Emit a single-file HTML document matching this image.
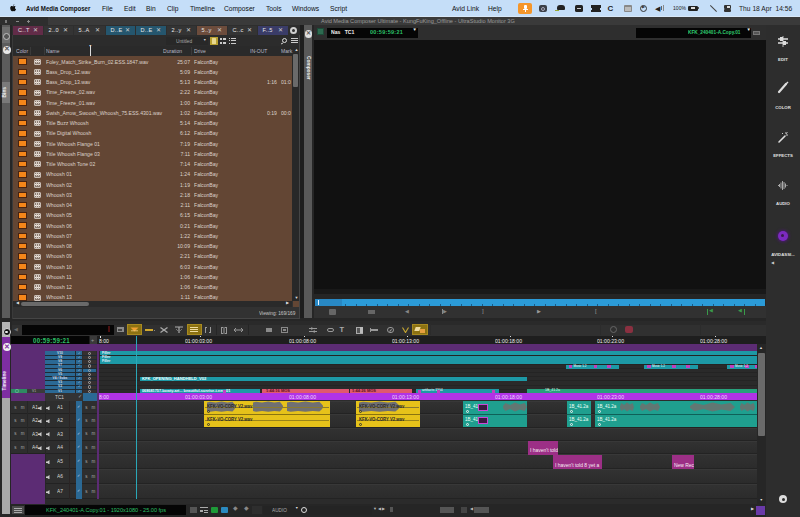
<!DOCTYPE html>
<html><head><meta charset="utf-8">
<style>
*{margin:0;padding:0;box-sizing:border-box}
html,body{width:800px;height:517px;overflow:hidden;background:#262626;font-family:"Liberation Sans",sans-serif}
.a{position:absolute}
.t{position:absolute;white-space:nowrap;line-height:1}
</style></head><body>
<div class="a" style="left:0px;top:0px;width:800px;height:17px;background:#c5def8;"></div>
<div class="a" style="left:0px;top:16px;width:800px;height:1px;background:#d8e8f8;"></div>
<svg class="a" style="left:10.3px;top:4px" width="6.3" height="7.7" viewBox="0 0 9 11"><path d="M6.2 0.5c0 1-0.7 1.9-1.7 2 0-1 0.8-1.9 1.7-2zM4.5 3.1c0.6 0 1.1-0.4 1.8-0.4 0.5 0 1.4 0.2 1.9 1-1.6 0.9-1.3 3.2 0.4 3.8-0.4 1.2-1.3 2.9-2.3 2.9-0.7 0-0.9-0.4-1.7-0.4s-1.1 0.4-1.7 0.4C1.8 10.4 0.3 7.8 0.3 5.6c0-2 1.3-2.9 2.4-2.9 0.7 0 1.3 0.4 1.8 0.4z" fill="#111"/></svg>
<div class="t" style="left:26px;top:6px;font-size:6.7px;color:#101010;transform:scaleX(0.92);transform-origin:0 0;font-weight:bold">Avid Media Composer</div>
<div class="t" style="left:102px;top:6px;font-size:6.7px;color:#101010;">File</div>
<div class="t" style="left:124px;top:6px;font-size:6.7px;color:#101010;">Edit</div>
<div class="t" style="left:146px;top:6px;font-size:6.7px;color:#101010;">Bin</div>
<div class="t" style="left:167px;top:6px;font-size:6.7px;color:#101010;">Clip</div>
<div class="t" style="left:190px;top:6px;font-size:6.7px;color:#101010;">Timeline</div>
<div class="t" style="left:224px;top:6px;font-size:6.7px;color:#101010;">Composer</div>
<div class="t" style="left:266px;top:6px;font-size:6.7px;color:#101010;">Tools</div>
<div class="t" style="left:292px;top:6px;font-size:6.7px;color:#101010;">Windows</div>
<div class="t" style="left:330px;top:6px;font-size:6.7px;color:#101010;">Script</div>
<div class="t" style="left:452px;top:6px;font-size:6.7px;color:#101010;">Avid Link</div>
<div class="t" style="left:488px;top:6px;font-size:6.7px;color:#101010;">Help</div>
<div class="a" style="left:518px;top:3px;width:14px;height:11px;background:#f5962a;border-radius:2px"></div>
<div class="a" style="left:524px;top:5px;width:2.5px;height:4px;background:#fff;border-radius:1px"></div>
<div class="a" style="left:522.5px;top:9px;width:5.5px;height:0.8px;background:#fff;"></div>
<div class="a" style="left:524.8px;top:9.5px;width:1px;height:2px;background:#fff;"></div>
<div class="a" style="left:539px;top:5px;width:8px;height:7px;background:#3a3f48;border-radius:2px"></div>
<div class="a" style="left:541px;top:6.5px;width:4px;height:4px;background:transparent;border:0.8px solid #aab;border-radius:50%"></div>
<div class="a" style="left:557px;top:5px;width:8px;height:5px;background:#222;border-radius:3px 3px 1px 1px"></div>
<div class="a" style="left:555px;top:10px;width:4px;height:1px;background:#9a3;"></div>
<div class="a" style="left:575px;top:5px;width:7.5px;height:7px;background:#222;border-radius:1.5px"></div>
<div class="a" style="left:577px;top:7.5px;width:3.5px;height:1px;background:#ccc;"></div>
<div class="a" style="left:591px;top:5px;width:10px;height:2.5px;background:#222;"></div>
<div class="a" style="left:592px;top:7.8px;width:8px;height:2.2px;background:#222;"></div>
<div class="a" style="left:591px;top:10.3px;width:10px;height:1.8px;background:#222;"></div>
<div class="t" style="left:607.5px;top:4.5px;font-size:8px;color:#222;font-weight:bold">C</div>
<div class="a" style="left:624px;top:5px;width:7.5px;height:6.5px;background:#888;border-radius:1px"></div>
<div class="a" style="left:625px;top:7px;width:5.5px;height:3.5px;background:#bbb;"></div>
<div class="a" style="left:639.5px;top:4.5px;width:7px;height:7px;background:transparent;border:0.9px solid #333;border-radius:50%"></div>
<div class="t" style="left:641.8px;top:6.2px;font-size:3.6px;color:#333;">▶</div>
<div class="t" style="left:655px;top:4.5px;font-size:7px;color:#222;">◀</div>
<div class="a" style="left:661px;top:6px;width:0.8px;height:4px;background:#666;"></div>
<div class="a" style="left:662.5px;top:5px;width:0.8px;height:6px;background:#888;"></div>
<div class="t" style="left:672.5px;top:6px;font-size:5.5px;color:#222;transform:scaleX(0.92);transform-origin:0 0;">100%</div>
<div class="a" style="left:688px;top:5.5px;width:10px;height:5px;background:#222;border-radius:1.2px"></div>
<div class="a" style="left:698.3px;top:7px;width:1px;height:2px;background:#555;"></div>
<div class="a" style="left:691px;top:7px;width:4px;height:2px;background:#ddd;"></div>
<div class="a" style="left:709px;top:8px;width:9px;height:0.9px;background:#444;transform:rotate(45deg)"></div>
<div class="a" style="left:724px;top:5px;width:7px;height:3.5px;background:#333;border-radius:1px"></div>
<div class="a" style="left:724px;top:9px;width:7px;height:3px;background:#333;border-radius:1px"></div>
<div class="a" style="left:727px;top:5.8px;width:3px;height:2px;background:#ddd;"></div>
<div class="t" style="left:739px;top:6px;font-size:6.7px;color:#1a1a1a;">Thu 18 Apr&nbsp; 14:56</div>
<div class="a" style="left:0px;top:17px;width:800px;height:8px;background:#3a3a3a;"></div>
<div class="a" style="left:0px;top:17px;width:48px;height:8px;background:#2e2e2e;"></div>
<div class="a" style="left:4.5px;top:20px;width:2.5px;height:2.5px;background:#777;"></div>
<div class="a" style="left:16px;top:21px;width:3px;height:0.8px;background:#888;"></div>
<div class="a" style="left:27px;top:21px;width:3px;height:0.8px;background:#888;"></div>
<div class="a" style="left:28.1px;top:19.9px;width:0.8px;height:3px;background:#888;"></div>
<div class="t" style="left:321px;top:18.5px;font-size:5.6px;color:#9c9c9c;">Avid Media Composer Ultimate - KungFuKing_Offline - UltraStudio Monitor 3G</div>
<div class="a" style="left:2px;top:25px;width:8px;height:293px;background:#5c5c5c;"></div>
<div class="a" style="left:2px;top:27px;width:8px;height:16px;background:#6e6e6e;"></div>
<div class="a" style="left:3px;top:32.5px;width:7px;height:7px;background:#555;border:1.8px solid #c0c0c0;border-radius:50%"></div>
<div class="a" style="left:2.5px;top:45.5px;width:8px;height:8px;background:#e8e8e8;border-radius:50%"></div>
<div class="t" style="left:4px;top:46px;font-size:6.5px;color:#5c5c5c;font-weight:bold">✕</div>
<div class="a" style="left:2px;top:82px;width:8px;height:21px;background:#7a7a7a;"></div>
<div class="t" style="left:3.4px;top:87px;font-size:4.8px;color:#eee;transform:rotate(-90deg) translate(-100%,0);transform-origin:0 0;font-weight:bold">Bins</div>
<div class="a" style="left:2px;top:322px;width:8px;height:15px;background:#b4b4b4;"></div>
<div class="a" style="left:2px;top:337px;width:8px;height:61px;background:#7e2ea2;"></div>
<div class="a" style="left:2px;top:398px;width:8px;height:116px;background:#a9a9a9;"></div>
<div class="a" style="left:2.5px;top:328px;width:8px;height:8px;background:#111;border-radius:50%;border:1.2px solid #ddd"></div>
<div class="a" style="left:5.3px;top:330.8px;width:2.4px;height:2.4px;background:#eee;border-radius:50%"></div>
<div class="a" style="left:2.5px;top:343px;width:8px;height:8px;background:#f0f0f0;border-radius:50%"></div>
<div class="t" style="left:4px;top:343.5px;font-size:6.5px;color:#7e2ea2;font-weight:bold">✕</div>
<div class="t" style="left:3.4px;top:371px;font-size:4.8px;color:#f0e8f8;transform:rotate(-90deg) translate(-100%,0);transform-origin:0 0;font-weight:bold">Timeline</div>
<div class="a" style="left:12px;top:25px;width:289px;height:293px;background:#323232;"></div>
<div class="a" style="left:12px;top:25px;width:289px;height:10px;background:#2e2e2e;"></div>
<div class="a" style="left:13px;top:26px;width:30px;height:8.5px;background:#622c48;"></div>
<div class="t" style="left:18px;top:28px;font-size:5.6px;color:#e8e8e8;letter-spacing:0.3px">C..T</div>
<div class="t" style="left:33px;top:27.6px;font-size:5.6px;color:#ccc;">✕</div>
<div class="a" style="left:43.5px;top:26px;width:29.5px;height:8.5px;background:#343434;"></div>
<div class="t" style="left:48.5px;top:28px;font-size:5.6px;color:#e8e8e8;letter-spacing:0.3px">2..0</div>
<div class="t" style="left:63px;top:27.6px;font-size:5.6px;color:#ccc;">✕</div>
<div class="a" style="left:73.5px;top:26px;width:31.5px;height:8.5px;background:#343434;"></div>
<div class="t" style="left:78.5px;top:28px;font-size:5.6px;color:#e8e8e8;letter-spacing:0.3px">5..A</div>
<div class="t" style="left:95px;top:27.6px;font-size:5.6px;color:#ccc;">✕</div>
<div class="a" style="left:105.5px;top:26px;width:29.5px;height:8.5px;background:#25566e;"></div>
<div class="t" style="left:110.5px;top:28px;font-size:5.6px;color:#e8e8e8;letter-spacing:0.3px">D..E</div>
<div class="t" style="left:125px;top:27.6px;font-size:5.6px;color:#ccc;">✕</div>
<div class="a" style="left:135.5px;top:26px;width:30.5px;height:8.5px;background:#25566e;"></div>
<div class="t" style="left:140.5px;top:28px;font-size:5.6px;color:#e8e8e8;letter-spacing:0.3px">D..E</div>
<div class="t" style="left:156px;top:27.6px;font-size:5.6px;color:#ccc;">✕</div>
<div class="a" style="left:166.5px;top:26px;width:29.5px;height:8.5px;background:#343434;"></div>
<div class="t" style="left:171.5px;top:28px;font-size:5.6px;color:#e8e8e8;letter-spacing:0.3px">2..y</div>
<div class="t" style="left:186px;top:27.6px;font-size:5.6px;color:#ccc;">✕</div>
<div class="a" style="left:196.5px;top:26px;width:30.5px;height:8.5px;background:#6c4c3c;"></div>
<div class="t" style="left:201.5px;top:28px;font-size:5.6px;color:#e8e8e8;letter-spacing:0.3px">5..y</div>
<div class="t" style="left:217px;top:27.6px;font-size:5.6px;color:#ccc;">✕</div>
<div class="a" style="left:227.5px;top:26px;width:29.5px;height:8.5px;background:#343434;"></div>
<div class="t" style="left:232.5px;top:28px;font-size:5.6px;color:#e8e8e8;letter-spacing:0.3px">C..c</div>
<div class="t" style="left:247px;top:27.6px;font-size:5.6px;color:#ccc;">✕</div>
<div class="a" style="left:257.5px;top:26px;width:30.5px;height:8.5px;background:#3a3c68;"></div>
<div class="t" style="left:262.5px;top:28px;font-size:5.6px;color:#e8e8e8;letter-spacing:0.3px">F..5</div>
<div class="t" style="left:278px;top:27.6px;font-size:5.6px;color:#ccc;">✕</div>
<div class="a" style="left:12px;top:34.5px;width:289px;height:0.7px;background:#3e3430;"></div>
<div class="a" style="left:289.5px;top:26.5px;width:7.5px;height:7.5px;background:#333;border:2px solid #d0d0d0;border-radius:50%"></div>
<div class="a" style="left:12px;top:35px;width:289px;height:11px;background:#2c2c2c;"></div>
<div class="a" style="left:166px;top:36.5px;width:42px;height:8.5px;background:#282828;"></div>
<div class="t" style="left:176px;top:38.8px;font-size:5px;color:#aaa;transform:scaleX(0.95);transform-origin:0 0;">Untitled</div>
<div class="t" style="left:203px;top:38.5px;font-size:3.6px;color:#ccc;">▼</div>
<div class="a" style="left:209.5px;top:36.5px;width:8px;height:8.5px;background:#b8a030;"></div>
<div class="a" style="left:211.5px;top:37.8px;width:4px;height:6px;background:#e8d890;border-radius:0.5px"></div>
<div class="a" style="left:219.5px;top:37.5px;width:2.8px;height:2.8px;background:#ccc;"></div>
<div class="a" style="left:223.3px;top:37.5px;width:2.8px;height:2.8px;background:#ccc;"></div>
<div class="a" style="left:219.5px;top:41.5px;width:2.8px;height:2.8px;background:#ccc;"></div>
<div class="a" style="left:223.3px;top:41.5px;width:2.8px;height:2.8px;background:#ccc;"></div>
<div class="a" style="left:229px;top:38.0px;width:1.2px;height:1.2px;background:#ccc;"></div>
<div class="a" style="left:231px;top:38.0px;width:5px;height:1.2px;background:#ccc;"></div>
<div class="a" style="left:229px;top:40.3px;width:1.2px;height:1.2px;background:#ccc;"></div>
<div class="a" style="left:231px;top:40.3px;width:5px;height:1.2px;background:#ccc;"></div>
<div class="a" style="left:229px;top:42.6px;width:1.2px;height:1.2px;background:#ccc;"></div>
<div class="a" style="left:231px;top:42.6px;width:5px;height:1.2px;background:#ccc;"></div>
<div class="a" style="left:281.5px;top:37.5px;width:5.5px;height:5.5px;background:transparent;border:1px solid #ddd;border-radius:50%"></div>
<div class="a" style="left:280.5px;top:43px;width:2px;height:1px;background:#ddd;transform:rotate(-45deg)"></div>
<div class="a" style="left:290.5px;top:38.0px;width:7px;height:1px;background:#ccc;"></div>
<div class="a" style="left:290.5px;top:40.2px;width:7px;height:1px;background:#ccc;"></div>
<div class="a" style="left:290.5px;top:42.4px;width:7px;height:1px;background:#ccc;"></div>
<div class="a" style="left:12px;top:46px;width:289px;height:10px;background:#2a2a2a;"></div>
<div class="t" style="left:16px;top:48.8px;font-size:5.5px;color:#b8b8c8;transform:scaleX(0.92);transform-origin:0 0;">Color</div>
<div class="t" style="left:46px;top:48.8px;font-size:5.5px;color:#b8b8c8;transform:scaleX(0.92);transform-origin:0 0;">Name</div>
<div class="t" style="left:163px;top:48.8px;font-size:5.5px;color:#b8b8c8;transform:scaleX(0.92);transform-origin:0 0;">Duration</div>
<div class="t" style="left:194px;top:48.8px;font-size:5.5px;color:#b8b8c8;transform:scaleX(0.92);transform-origin:0 0;">Drive</div>
<div class="t" style="left:250px;top:48.8px;font-size:5.5px;color:#b8b8c8;transform:scaleX(0.92);transform-origin:0 0;">IN-OUT</div>
<div class="t" style="left:281px;top:48.8px;font-size:5.5px;color:#b8b8c8;transform:scaleX(0.92);transform-origin:0 0;">Mark</div>
<div class="a" style="left:30px;top:47px;width:0.6px;height:8px;background:#3a3a3a;"></div>
<div class="a" style="left:44px;top:47px;width:0.6px;height:8px;background:#3a3a3a;"></div>
<div class="a" style="left:190.5px;top:47px;width:0.6px;height:8px;background:#3a3a3a;"></div>
<div class="a" style="left:90.3px;top:46px;width:0.9px;height:10px;background:#ddd;"></div>
<div class="t" style="left:88.6px;top:44.6px;font-size:3.6px;color:#ddd;">▼</div>
<div class="t" style="left:294.5px;top:47.5px;font-size:4px;color:#ddd;">▲</div>
<div class="a" style="left:13px;top:56px;width:279px;height:245px;background:#634634;"></div>
<div class="a" style="left:18.3px;top:58.3px;width:8.3px;height:6.5px;background:#f4861a;border:1px solid #4a2410"></div>
<div class="a" style="left:33.5px;top:58.8px;width:7.5px;height:6px;background:#8a7a70;border:0.9px solid #c8bcb4;border-radius:1px"></div>
<div class="a" style="left:34.5px;top:61.4px;width:5.5px;height:0.9px;background:#f0e8e0;"></div>
<div class="a" style="left:35.5px;top:59.8px;width:0.7px;height:3.6px;background:#d8ccc4;"></div>
<div class="a" style="left:38.3px;top:59.8px;width:0.7px;height:3.6px;background:#d8ccc4;"></div>
<div class="t" style="left:45.5px;top:58.6px;font-size:6.1px;color:#dcd2ca;transform:scaleX(0.84);transform-origin:0 0;">Foley_Match_Strike_Burn_02.ESS.1847.wav</div>
<div class="t" style="left:140px;width:50px;text-align:right;top:58.6px;font-size:6.1px;color:#dcd2ca;transform:scaleX(.84);transform-origin:100% 0">25:07</div>
<div class="t" style="left:194px;top:58.6px;font-size:6.1px;color:#dcd2ca;transform:scaleX(0.84);transform-origin:0 0;">FalconBay</div>
<div class="a" style="left:18.3px;top:68.55px;width:8.3px;height:6.5px;background:#f4861a;border:1px solid #4a2410"></div>
<div class="a" style="left:33.5px;top:69.05px;width:7.5px;height:6px;background:#8a7a70;border:0.9px solid #c8bcb4;border-radius:1px"></div>
<div class="a" style="left:34.5px;top:71.65px;width:5.5px;height:0.9px;background:#f0e8e0;"></div>
<div class="a" style="left:35.5px;top:70.05px;width:0.7px;height:3.6px;background:#d8ccc4;"></div>
<div class="a" style="left:38.3px;top:70.05px;width:0.7px;height:3.6px;background:#d8ccc4;"></div>
<div class="t" style="left:45.5px;top:68.85px;font-size:6.1px;color:#dcd2ca;transform:scaleX(0.84);transform-origin:0 0;">Bass_Drop_12.wav</div>
<div class="t" style="left:140px;width:50px;text-align:right;top:68.85px;font-size:6.1px;color:#dcd2ca;transform:scaleX(.84);transform-origin:100% 0">5:09</div>
<div class="t" style="left:194px;top:68.85px;font-size:6.1px;color:#dcd2ca;transform:scaleX(0.84);transform-origin:0 0;">FalconBay</div>
<div class="a" style="left:18.3px;top:78.8px;width:8.3px;height:6.5px;background:#f4861a;border:1px solid #4a2410"></div>
<div class="a" style="left:33.5px;top:79.3px;width:7.5px;height:6px;background:#8a7a70;border:0.9px solid #c8bcb4;border-radius:1px"></div>
<div class="a" style="left:34.5px;top:81.9px;width:5.5px;height:0.9px;background:#f0e8e0;"></div>
<div class="a" style="left:35.5px;top:80.3px;width:0.7px;height:3.6px;background:#d8ccc4;"></div>
<div class="a" style="left:38.3px;top:80.3px;width:0.7px;height:3.6px;background:#d8ccc4;"></div>
<div class="t" style="left:45.5px;top:79.1px;font-size:6.1px;color:#dcd2ca;transform:scaleX(0.84);transform-origin:0 0;">Bass_Drop_13.wav</div>
<div class="t" style="left:140px;width:50px;text-align:right;top:79.1px;font-size:6.1px;color:#dcd2ca;transform:scaleX(.84);transform-origin:100% 0">5:13</div>
<div class="t" style="left:194px;top:79.1px;font-size:6.1px;color:#dcd2ca;transform:scaleX(0.84);transform-origin:0 0;">FalconBay</div>
<div class="t" style="left:267px;top:79.1px;font-size:6.1px;color:#dcd2ca;transform:scaleX(0.84);transform-origin:0 0;">1:16</div>
<div class="t" style="left:281px;top:79.1px;font-size:6.1px;color:#dcd2ca;transform:scaleX(0.84);transform-origin:0 0;">01:0</div>
<div class="a" style="left:18.3px;top:89.05px;width:8.3px;height:6.5px;background:#f4861a;border:1px solid #4a2410"></div>
<div class="a" style="left:33.5px;top:89.55px;width:7.5px;height:6px;background:#8a7a70;border:0.9px solid #c8bcb4;border-radius:1px"></div>
<div class="a" style="left:34.5px;top:92.15px;width:5.5px;height:0.9px;background:#f0e8e0;"></div>
<div class="a" style="left:35.5px;top:90.55px;width:0.7px;height:3.6px;background:#d8ccc4;"></div>
<div class="a" style="left:38.3px;top:90.55px;width:0.7px;height:3.6px;background:#d8ccc4;"></div>
<div class="t" style="left:45.5px;top:89.35px;font-size:6.1px;color:#dcd2ca;transform:scaleX(0.84);transform-origin:0 0;">Time_Freeze_02.wav</div>
<div class="t" style="left:140px;width:50px;text-align:right;top:89.35px;font-size:6.1px;color:#dcd2ca;transform:scaleX(.84);transform-origin:100% 0">2:22</div>
<div class="t" style="left:194px;top:89.35px;font-size:6.1px;color:#dcd2ca;transform:scaleX(0.84);transform-origin:0 0;">FalconBay</div>
<div class="a" style="left:18.3px;top:99.3px;width:8.3px;height:6.5px;background:#f4861a;border:1px solid #4a2410"></div>
<div class="a" style="left:33.5px;top:99.8px;width:7.5px;height:6px;background:#8a7a70;border:0.9px solid #c8bcb4;border-radius:1px"></div>
<div class="a" style="left:34.5px;top:102.4px;width:5.5px;height:0.9px;background:#f0e8e0;"></div>
<div class="a" style="left:35.5px;top:100.8px;width:0.7px;height:3.6px;background:#d8ccc4;"></div>
<div class="a" style="left:38.3px;top:100.8px;width:0.7px;height:3.6px;background:#d8ccc4;"></div>
<div class="t" style="left:45.5px;top:99.6px;font-size:6.1px;color:#dcd2ca;transform:scaleX(0.84);transform-origin:0 0;">Time_Freeze_01.wav</div>
<div class="t" style="left:140px;width:50px;text-align:right;top:99.6px;font-size:6.1px;color:#dcd2ca;transform:scaleX(.84);transform-origin:100% 0">1:00</div>
<div class="t" style="left:194px;top:99.6px;font-size:6.1px;color:#dcd2ca;transform:scaleX(0.84);transform-origin:0 0;">FalconBay</div>
<div class="a" style="left:18.3px;top:109.55px;width:8.3px;height:6.5px;background:#f4861a;border:1px solid #4a2410"></div>
<div class="a" style="left:33.5px;top:110.05px;width:7.5px;height:6px;background:#8a7a70;border:0.9px solid #c8bcb4;border-radius:1px"></div>
<div class="a" style="left:34.5px;top:112.65px;width:5.5px;height:0.9px;background:#f0e8e0;"></div>
<div class="a" style="left:35.5px;top:111.05px;width:0.7px;height:3.6px;background:#d8ccc4;"></div>
<div class="a" style="left:38.3px;top:111.05px;width:0.7px;height:3.6px;background:#d8ccc4;"></div>
<div class="t" style="left:45.5px;top:109.85px;font-size:6.1px;color:#dcd2ca;transform:scaleX(0.84);transform-origin:0 0;">Swish_Arrow_Swoosh_Whoosh_75.ESS.4301.wav</div>
<div class="t" style="left:140px;width:50px;text-align:right;top:109.85px;font-size:6.1px;color:#dcd2ca;transform:scaleX(.84);transform-origin:100% 0">1:02</div>
<div class="t" style="left:194px;top:109.85px;font-size:6.1px;color:#dcd2ca;transform:scaleX(0.84);transform-origin:0 0;">FalconBay</div>
<div class="t" style="left:267px;top:109.85px;font-size:6.1px;color:#dcd2ca;transform:scaleX(0.84);transform-origin:0 0;">0:19</div>
<div class="t" style="left:281px;top:109.85px;font-size:6.1px;color:#dcd2ca;transform:scaleX(0.84);transform-origin:0 0;">00:0</div>
<div class="a" style="left:18.3px;top:119.8px;width:8.3px;height:6.5px;background:#f4861a;border:1px solid #4a2410"></div>
<div class="a" style="left:33.5px;top:120.3px;width:7.5px;height:6px;background:#8a7a70;border:0.9px solid #c8bcb4;border-radius:1px"></div>
<div class="a" style="left:34.5px;top:122.9px;width:5.5px;height:0.9px;background:#f0e8e0;"></div>
<div class="a" style="left:35.5px;top:121.3px;width:0.7px;height:3.6px;background:#d8ccc4;"></div>
<div class="a" style="left:38.3px;top:121.3px;width:0.7px;height:3.6px;background:#d8ccc4;"></div>
<div class="t" style="left:45.5px;top:120.1px;font-size:6.1px;color:#dcd2ca;transform:scaleX(0.84);transform-origin:0 0;">Title Buzz Whoosh</div>
<div class="t" style="left:140px;width:50px;text-align:right;top:120.1px;font-size:6.1px;color:#dcd2ca;transform:scaleX(.84);transform-origin:100% 0">5:14</div>
<div class="t" style="left:194px;top:120.1px;font-size:6.1px;color:#dcd2ca;transform:scaleX(0.84);transform-origin:0 0;">FalconBay</div>
<div class="a" style="left:18.3px;top:130.05px;width:8.3px;height:6.5px;background:#f4861a;border:1px solid #4a2410"></div>
<div class="a" style="left:33.5px;top:130.55px;width:7.5px;height:6px;background:#8a7a70;border:0.9px solid #c8bcb4;border-radius:1px"></div>
<div class="a" style="left:34.5px;top:133.15px;width:5.5px;height:0.9px;background:#f0e8e0;"></div>
<div class="a" style="left:35.5px;top:131.55px;width:0.7px;height:3.6px;background:#d8ccc4;"></div>
<div class="a" style="left:38.3px;top:131.55px;width:0.7px;height:3.6px;background:#d8ccc4;"></div>
<div class="t" style="left:45.5px;top:130.35px;font-size:6.1px;color:#dcd2ca;transform:scaleX(0.84);transform-origin:0 0;">Title Digital Whoosh</div>
<div class="t" style="left:140px;width:50px;text-align:right;top:130.35px;font-size:6.1px;color:#dcd2ca;transform:scaleX(.84);transform-origin:100% 0">6:12</div>
<div class="t" style="left:194px;top:130.35px;font-size:6.1px;color:#dcd2ca;transform:scaleX(0.84);transform-origin:0 0;">FalconBay</div>
<div class="a" style="left:18.3px;top:140.3px;width:8.3px;height:6.5px;background:#f4861a;border:1px solid #4a2410"></div>
<div class="a" style="left:33.5px;top:140.8px;width:7.5px;height:6px;background:#8a7a70;border:0.9px solid #c8bcb4;border-radius:1px"></div>
<div class="a" style="left:34.5px;top:143.4px;width:5.5px;height:0.9px;background:#f0e8e0;"></div>
<div class="a" style="left:35.5px;top:141.8px;width:0.7px;height:3.6px;background:#d8ccc4;"></div>
<div class="a" style="left:38.3px;top:141.8px;width:0.7px;height:3.6px;background:#d8ccc4;"></div>
<div class="t" style="left:45.5px;top:140.6px;font-size:6.1px;color:#dcd2ca;transform:scaleX(0.84);transform-origin:0 0;">Title Whoosh Flange 01</div>
<div class="t" style="left:140px;width:50px;text-align:right;top:140.6px;font-size:6.1px;color:#dcd2ca;transform:scaleX(.84);transform-origin:100% 0">7:19</div>
<div class="t" style="left:194px;top:140.6px;font-size:6.1px;color:#dcd2ca;transform:scaleX(0.84);transform-origin:0 0;">FalconBay</div>
<div class="a" style="left:18.3px;top:150.55px;width:8.3px;height:6.5px;background:#f4861a;border:1px solid #4a2410"></div>
<div class="a" style="left:33.5px;top:151.05px;width:7.5px;height:6px;background:#8a7a70;border:0.9px solid #c8bcb4;border-radius:1px"></div>
<div class="a" style="left:34.5px;top:153.65px;width:5.5px;height:0.9px;background:#f0e8e0;"></div>
<div class="a" style="left:35.5px;top:152.05px;width:0.7px;height:3.6px;background:#d8ccc4;"></div>
<div class="a" style="left:38.3px;top:152.05px;width:0.7px;height:3.6px;background:#d8ccc4;"></div>
<div class="t" style="left:45.5px;top:150.85px;font-size:6.1px;color:#dcd2ca;transform:scaleX(0.84);transform-origin:0 0;">Title Whoosh Flange 03</div>
<div class="t" style="left:140px;width:50px;text-align:right;top:150.85px;font-size:6.1px;color:#dcd2ca;transform:scaleX(.84);transform-origin:100% 0">7:11</div>
<div class="t" style="left:194px;top:150.85px;font-size:6.1px;color:#dcd2ca;transform:scaleX(0.84);transform-origin:0 0;">FalconBay</div>
<div class="a" style="left:18.3px;top:160.8px;width:8.3px;height:6.5px;background:#f4861a;border:1px solid #4a2410"></div>
<div class="a" style="left:33.5px;top:161.3px;width:7.5px;height:6px;background:#8a7a70;border:0.9px solid #c8bcb4;border-radius:1px"></div>
<div class="a" style="left:34.5px;top:163.9px;width:5.5px;height:0.9px;background:#f0e8e0;"></div>
<div class="a" style="left:35.5px;top:162.3px;width:0.7px;height:3.6px;background:#d8ccc4;"></div>
<div class="a" style="left:38.3px;top:162.3px;width:0.7px;height:3.6px;background:#d8ccc4;"></div>
<div class="t" style="left:45.5px;top:161.1px;font-size:6.1px;color:#dcd2ca;transform:scaleX(0.84);transform-origin:0 0;">Title Whoosh Tone 02</div>
<div class="t" style="left:140px;width:50px;text-align:right;top:161.1px;font-size:6.1px;color:#dcd2ca;transform:scaleX(.84);transform-origin:100% 0">7:14</div>
<div class="t" style="left:194px;top:161.1px;font-size:6.1px;color:#dcd2ca;transform:scaleX(0.84);transform-origin:0 0;">FalconBay</div>
<div class="a" style="left:18.3px;top:171.05px;width:8.3px;height:6.5px;background:#f4861a;border:1px solid #4a2410"></div>
<div class="a" style="left:33.5px;top:171.55px;width:7.5px;height:6px;background:#8a7a70;border:0.9px solid #c8bcb4;border-radius:1px"></div>
<div class="a" style="left:34.5px;top:174.15px;width:5.5px;height:0.9px;background:#f0e8e0;"></div>
<div class="a" style="left:35.5px;top:172.55px;width:0.7px;height:3.6px;background:#d8ccc4;"></div>
<div class="a" style="left:38.3px;top:172.55px;width:0.7px;height:3.6px;background:#d8ccc4;"></div>
<div class="t" style="left:45.5px;top:171.35px;font-size:6.1px;color:#dcd2ca;transform:scaleX(0.84);transform-origin:0 0;">Whoosh 01</div>
<div class="t" style="left:140px;width:50px;text-align:right;top:171.35px;font-size:6.1px;color:#dcd2ca;transform:scaleX(.84);transform-origin:100% 0">1:24</div>
<div class="t" style="left:194px;top:171.35px;font-size:6.1px;color:#dcd2ca;transform:scaleX(0.84);transform-origin:0 0;">FalconBay</div>
<div class="a" style="left:18.3px;top:181.3px;width:8.3px;height:6.5px;background:#f4861a;border:1px solid #4a2410"></div>
<div class="a" style="left:33.5px;top:181.8px;width:7.5px;height:6px;background:#8a7a70;border:0.9px solid #c8bcb4;border-radius:1px"></div>
<div class="a" style="left:34.5px;top:184.4px;width:5.5px;height:0.9px;background:#f0e8e0;"></div>
<div class="a" style="left:35.5px;top:182.8px;width:0.7px;height:3.6px;background:#d8ccc4;"></div>
<div class="a" style="left:38.3px;top:182.8px;width:0.7px;height:3.6px;background:#d8ccc4;"></div>
<div class="t" style="left:45.5px;top:181.6px;font-size:6.1px;color:#dcd2ca;transform:scaleX(0.84);transform-origin:0 0;">Whoosh 02</div>
<div class="t" style="left:140px;width:50px;text-align:right;top:181.6px;font-size:6.1px;color:#dcd2ca;transform:scaleX(.84);transform-origin:100% 0">1:19</div>
<div class="t" style="left:194px;top:181.6px;font-size:6.1px;color:#dcd2ca;transform:scaleX(0.84);transform-origin:0 0;">FalconBay</div>
<div class="a" style="left:18.3px;top:191.55px;width:8.3px;height:6.5px;background:#f4861a;border:1px solid #4a2410"></div>
<div class="a" style="left:33.5px;top:192.05px;width:7.5px;height:6px;background:#8a7a70;border:0.9px solid #c8bcb4;border-radius:1px"></div>
<div class="a" style="left:34.5px;top:194.65px;width:5.5px;height:0.9px;background:#f0e8e0;"></div>
<div class="a" style="left:35.5px;top:193.05px;width:0.7px;height:3.6px;background:#d8ccc4;"></div>
<div class="a" style="left:38.3px;top:193.05px;width:0.7px;height:3.6px;background:#d8ccc4;"></div>
<div class="t" style="left:45.5px;top:191.85px;font-size:6.1px;color:#dcd2ca;transform:scaleX(0.84);transform-origin:0 0;">Whoosh 03</div>
<div class="t" style="left:140px;width:50px;text-align:right;top:191.85px;font-size:6.1px;color:#dcd2ca;transform:scaleX(.84);transform-origin:100% 0">2:18</div>
<div class="t" style="left:194px;top:191.85px;font-size:6.1px;color:#dcd2ca;transform:scaleX(0.84);transform-origin:0 0;">FalconBay</div>
<div class="a" style="left:18.3px;top:201.8px;width:8.3px;height:6.5px;background:#f4861a;border:1px solid #4a2410"></div>
<div class="a" style="left:33.5px;top:202.3px;width:7.5px;height:6px;background:#8a7a70;border:0.9px solid #c8bcb4;border-radius:1px"></div>
<div class="a" style="left:34.5px;top:204.9px;width:5.5px;height:0.9px;background:#f0e8e0;"></div>
<div class="a" style="left:35.5px;top:203.3px;width:0.7px;height:3.6px;background:#d8ccc4;"></div>
<div class="a" style="left:38.3px;top:203.3px;width:0.7px;height:3.6px;background:#d8ccc4;"></div>
<div class="t" style="left:45.5px;top:202.1px;font-size:6.1px;color:#dcd2ca;transform:scaleX(0.84);transform-origin:0 0;">Whoosh 04</div>
<div class="t" style="left:140px;width:50px;text-align:right;top:202.1px;font-size:6.1px;color:#dcd2ca;transform:scaleX(.84);transform-origin:100% 0">2:11</div>
<div class="t" style="left:194px;top:202.1px;font-size:6.1px;color:#dcd2ca;transform:scaleX(0.84);transform-origin:0 0;">FalconBay</div>
<div class="a" style="left:18.3px;top:212.05px;width:8.3px;height:6.5px;background:#f4861a;border:1px solid #4a2410"></div>
<div class="a" style="left:33.5px;top:212.55px;width:7.5px;height:6px;background:#8a7a70;border:0.9px solid #c8bcb4;border-radius:1px"></div>
<div class="a" style="left:34.5px;top:215.15px;width:5.5px;height:0.9px;background:#f0e8e0;"></div>
<div class="a" style="left:35.5px;top:213.55px;width:0.7px;height:3.6px;background:#d8ccc4;"></div>
<div class="a" style="left:38.3px;top:213.55px;width:0.7px;height:3.6px;background:#d8ccc4;"></div>
<div class="t" style="left:45.5px;top:212.35px;font-size:6.1px;color:#dcd2ca;transform:scaleX(0.84);transform-origin:0 0;">Whoosh 05</div>
<div class="t" style="left:140px;width:50px;text-align:right;top:212.35px;font-size:6.1px;color:#dcd2ca;transform:scaleX(.84);transform-origin:100% 0">6:15</div>
<div class="t" style="left:194px;top:212.35px;font-size:6.1px;color:#dcd2ca;transform:scaleX(0.84);transform-origin:0 0;">FalconBay</div>
<div class="a" style="left:18.3px;top:222.3px;width:8.3px;height:6.5px;background:#f4861a;border:1px solid #4a2410"></div>
<div class="a" style="left:33.5px;top:222.8px;width:7.5px;height:6px;background:#8a7a70;border:0.9px solid #c8bcb4;border-radius:1px"></div>
<div class="a" style="left:34.5px;top:225.4px;width:5.5px;height:0.9px;background:#f0e8e0;"></div>
<div class="a" style="left:35.5px;top:223.8px;width:0.7px;height:3.6px;background:#d8ccc4;"></div>
<div class="a" style="left:38.3px;top:223.8px;width:0.7px;height:3.6px;background:#d8ccc4;"></div>
<div class="t" style="left:45.5px;top:222.6px;font-size:6.1px;color:#dcd2ca;transform:scaleX(0.84);transform-origin:0 0;">Whoosh 06</div>
<div class="t" style="left:140px;width:50px;text-align:right;top:222.6px;font-size:6.1px;color:#dcd2ca;transform:scaleX(.84);transform-origin:100% 0">0:21</div>
<div class="t" style="left:194px;top:222.6px;font-size:6.1px;color:#dcd2ca;transform:scaleX(0.84);transform-origin:0 0;">FalconBay</div>
<div class="a" style="left:18.3px;top:232.55px;width:8.3px;height:6.5px;background:#f4861a;border:1px solid #4a2410"></div>
<div class="a" style="left:33.5px;top:233.05px;width:7.5px;height:6px;background:#8a7a70;border:0.9px solid #c8bcb4;border-radius:1px"></div>
<div class="a" style="left:34.5px;top:235.65px;width:5.5px;height:0.9px;background:#f0e8e0;"></div>
<div class="a" style="left:35.5px;top:234.05px;width:0.7px;height:3.6px;background:#d8ccc4;"></div>
<div class="a" style="left:38.3px;top:234.05px;width:0.7px;height:3.6px;background:#d8ccc4;"></div>
<div class="t" style="left:45.5px;top:232.85px;font-size:6.1px;color:#dcd2ca;transform:scaleX(0.84);transform-origin:0 0;">Whoosh 07</div>
<div class="t" style="left:140px;width:50px;text-align:right;top:232.85px;font-size:6.1px;color:#dcd2ca;transform:scaleX(.84);transform-origin:100% 0">1:22</div>
<div class="t" style="left:194px;top:232.85px;font-size:6.1px;color:#dcd2ca;transform:scaleX(0.84);transform-origin:0 0;">FalconBay</div>
<div class="a" style="left:18.3px;top:242.8px;width:8.3px;height:6.5px;background:#f4861a;border:1px solid #4a2410"></div>
<div class="a" style="left:33.5px;top:243.3px;width:7.5px;height:6px;background:#8a7a70;border:0.9px solid #c8bcb4;border-radius:1px"></div>
<div class="a" style="left:34.5px;top:245.9px;width:5.5px;height:0.9px;background:#f0e8e0;"></div>
<div class="a" style="left:35.5px;top:244.3px;width:0.7px;height:3.6px;background:#d8ccc4;"></div>
<div class="a" style="left:38.3px;top:244.3px;width:0.7px;height:3.6px;background:#d8ccc4;"></div>
<div class="t" style="left:45.5px;top:243.1px;font-size:6.1px;color:#dcd2ca;transform:scaleX(0.84);transform-origin:0 0;">Whoosh 08</div>
<div class="t" style="left:140px;width:50px;text-align:right;top:243.1px;font-size:6.1px;color:#dcd2ca;transform:scaleX(.84);transform-origin:100% 0">10:09</div>
<div class="t" style="left:194px;top:243.1px;font-size:6.1px;color:#dcd2ca;transform:scaleX(0.84);transform-origin:0 0;">FalconBay</div>
<div class="a" style="left:18.3px;top:253.05px;width:8.3px;height:6.5px;background:#f4861a;border:1px solid #4a2410"></div>
<div class="a" style="left:33.5px;top:253.55px;width:7.5px;height:6px;background:#8a7a70;border:0.9px solid #c8bcb4;border-radius:1px"></div>
<div class="a" style="left:34.5px;top:256.15px;width:5.5px;height:0.9px;background:#f0e8e0;"></div>
<div class="a" style="left:35.5px;top:254.55px;width:0.7px;height:3.6px;background:#d8ccc4;"></div>
<div class="a" style="left:38.3px;top:254.55px;width:0.7px;height:3.6px;background:#d8ccc4;"></div>
<div class="t" style="left:45.5px;top:253.35px;font-size:6.1px;color:#dcd2ca;transform:scaleX(0.84);transform-origin:0 0;">Whoosh 09</div>
<div class="t" style="left:140px;width:50px;text-align:right;top:253.35px;font-size:6.1px;color:#dcd2ca;transform:scaleX(.84);transform-origin:100% 0">2:21</div>
<div class="t" style="left:194px;top:253.35px;font-size:6.1px;color:#dcd2ca;transform:scaleX(0.84);transform-origin:0 0;">FalconBay</div>
<div class="a" style="left:18.3px;top:263.3px;width:8.3px;height:6.5px;background:#f4861a;border:1px solid #4a2410"></div>
<div class="a" style="left:33.5px;top:263.8px;width:7.5px;height:6px;background:#8a7a70;border:0.9px solid #c8bcb4;border-radius:1px"></div>
<div class="a" style="left:34.5px;top:266.4px;width:5.5px;height:0.9px;background:#f0e8e0;"></div>
<div class="a" style="left:35.5px;top:264.8px;width:0.7px;height:3.6px;background:#d8ccc4;"></div>
<div class="a" style="left:38.3px;top:264.8px;width:0.7px;height:3.6px;background:#d8ccc4;"></div>
<div class="t" style="left:45.5px;top:263.6px;font-size:6.1px;color:#dcd2ca;transform:scaleX(0.84);transform-origin:0 0;">Whoosh 10</div>
<div class="t" style="left:140px;width:50px;text-align:right;top:263.6px;font-size:6.1px;color:#dcd2ca;transform:scaleX(.84);transform-origin:100% 0">6:03</div>
<div class="t" style="left:194px;top:263.6px;font-size:6.1px;color:#dcd2ca;transform:scaleX(0.84);transform-origin:0 0;">FalconBay</div>
<div class="a" style="left:18.3px;top:273.55px;width:8.3px;height:6.5px;background:#f4861a;border:1px solid #4a2410"></div>
<div class="a" style="left:33.5px;top:274.05px;width:7.5px;height:6px;background:#8a7a70;border:0.9px solid #c8bcb4;border-radius:1px"></div>
<div class="a" style="left:34.5px;top:276.65px;width:5.5px;height:0.9px;background:#f0e8e0;"></div>
<div class="a" style="left:35.5px;top:275.05px;width:0.7px;height:3.6px;background:#d8ccc4;"></div>
<div class="a" style="left:38.3px;top:275.05px;width:0.7px;height:3.6px;background:#d8ccc4;"></div>
<div class="t" style="left:45.5px;top:273.85px;font-size:6.1px;color:#dcd2ca;transform:scaleX(0.84);transform-origin:0 0;">Whoosh 11</div>
<div class="t" style="left:140px;width:50px;text-align:right;top:273.85px;font-size:6.1px;color:#dcd2ca;transform:scaleX(.84);transform-origin:100% 0">1:06</div>
<div class="t" style="left:194px;top:273.85px;font-size:6.1px;color:#dcd2ca;transform:scaleX(0.84);transform-origin:0 0;">FalconBay</div>
<div class="a" style="left:18.3px;top:283.8px;width:8.3px;height:6.5px;background:#f4861a;border:1px solid #4a2410"></div>
<div class="a" style="left:33.5px;top:284.3px;width:7.5px;height:6px;background:#8a7a70;border:0.9px solid #c8bcb4;border-radius:1px"></div>
<div class="a" style="left:34.5px;top:286.9px;width:5.5px;height:0.9px;background:#f0e8e0;"></div>
<div class="a" style="left:35.5px;top:285.3px;width:0.7px;height:3.6px;background:#d8ccc4;"></div>
<div class="a" style="left:38.3px;top:285.3px;width:0.7px;height:3.6px;background:#d8ccc4;"></div>
<div class="t" style="left:45.5px;top:284.1px;font-size:6.1px;color:#dcd2ca;transform:scaleX(0.84);transform-origin:0 0;">Whoosh 12</div>
<div class="t" style="left:140px;width:50px;text-align:right;top:284.1px;font-size:6.1px;color:#dcd2ca;transform:scaleX(.84);transform-origin:100% 0">1:06</div>
<div class="t" style="left:194px;top:284.1px;font-size:6.1px;color:#dcd2ca;transform:scaleX(0.84);transform-origin:0 0;">FalconBay</div>
<div class="a" style="left:18.3px;top:294.05px;width:8.3px;height:6.5px;background:#f4861a;border:1px solid #4a2410"></div>
<div class="a" style="left:33.5px;top:294.55px;width:7.5px;height:6px;background:#8a7a70;border:0.9px solid #c8bcb4;border-radius:1px"></div>
<div class="a" style="left:34.5px;top:297.15px;width:5.5px;height:0.9px;background:#f0e8e0;"></div>
<div class="a" style="left:35.5px;top:295.55px;width:0.7px;height:3.6px;background:#d8ccc4;"></div>
<div class="a" style="left:38.3px;top:295.55px;width:0.7px;height:3.6px;background:#d8ccc4;"></div>
<div class="t" style="left:45.5px;top:294.35px;font-size:6.1px;color:#dcd2ca;transform:scaleX(0.84);transform-origin:0 0;">Whoosh 13</div>
<div class="t" style="left:140px;width:50px;text-align:right;top:294.35px;font-size:6.1px;color:#dcd2ca;transform:scaleX(.84);transform-origin:100% 0">1:11</div>
<div class="t" style="left:194px;top:294.35px;font-size:6.1px;color:#dcd2ca;transform:scaleX(0.84);transform-origin:0 0;">FalconBay</div>
<div class="a" style="left:292px;top:53px;width:7px;height:248px;background:#282828;"></div>
<div class="a" style="left:293px;top:54px;width:4.5px;height:32.5px;background:#6a6a6a;border-radius:1px"></div>
<div class="a" style="left:13px;top:300.5px;width:279px;height:6px;background:#2a2a2a;"></div>
<div class="a" style="left:21px;top:301.5px;width:68px;height:4px;background:#6a6a6a;border-radius:2px"></div>
<div class="t" style="left:16px;top:301.3px;font-size:4px;color:#ddd;">◀</div>
<div class="t" style="left:286px;top:301.3px;font-size:4px;color:#ddd;">▶</div>
<div class="t" style="left:294.5px;top:295.5px;font-size:4px;color:#ddd;">▼</div>
<div class="a" style="left:292.5px;top:301px;width:6px;height:5.5px;background:#634634;"></div>
<div class="a" style="left:299px;top:35px;width:0.8px;height:284px;background:#454545;"></div>
<div class="a" style="left:12px;top:318px;width:288px;height:0.8px;background:#454545;"></div>
<div class="a" style="left:12px;top:35px;width:0.8px;height:284px;background:#3a3a3a;"></div>
<div class="t" style="left:259px;top:310.8px;font-size:5px;color:#c8c8c8;transform:scaleX(0.95);transform-origin:0 0;">Viewing: 169/169</div>
<div class="a" style="left:300px;top:25px;width:4px;height:293px;background:#1e1e1e;"></div>
<div class="a" style="left:304px;top:25px;width:8px;height:293px;background:#595959;"></div>
<div class="a" style="left:304.5px;top:30px;width:7.5px;height:7.5px;background:#e0e0e0;border-radius:50%"></div>
<div class="t" style="left:306px;top:30.3px;font-size:6.2px;color:#595959;font-weight:bold">✕</div>
<div class="t" style="left:309.8px;top:56px;font-size:4.8px;color:#e8e8e8;transform:rotate(90deg);transform-origin:0 0;font-weight:bold">Composer</div>
<div class="a" style="left:312px;top:25px;width:2px;height:293px;background:#262626;"></div>
<div class="a" style="left:314px;top:25px;width:452px;height:14.5px;background:#2e2e2e;"></div>
<div class="a" style="left:317px;top:28.3px;width:7px;height:7.2px;background:#2d6a50;border:1px solid #1d4a38"></div>
<div class="a" style="left:327.4px;top:28px;width:90.6px;height:9.5px;background:#050505;"></div>
<div class="t" style="left:330.5px;top:30px;font-size:5.6px;color:#f0f0f0;transform:scaleX(0.92);transform-origin:0 0;font-weight:bold">Nas&nbsp;&nbsp; TC1</div>
<div class="t" style="left:370px;top:30px;font-size:5.8px;color:#2cc068;transform:scaleX(0.95);transform-origin:0 0;font-weight:bold;letter-spacing:0.3px">00:59:59:21</div>
<div class="t" style="left:412.5px;top:28.3px;font-size:4.4px;color:#eee;">▼</div>
<div class="a" style="left:636px;top:28px;width:115px;height:9.5px;background:#050505;"></div>
<div class="t" style="left:688px;top:30px;font-size:5.5px;color:#30d070;transform:scaleX(0.86);transform-origin:0 0;font-weight:bold">KFK_240401-A.Copy.01</div>
<div class="t" style="left:746.5px;top:28.3px;font-size:4.4px;color:#eee;">▼</div>
<div class="a" style="left:753px;top:30.5px;width:7px;height:4.5px;background:#555;border:0.8px solid #777"></div>
<div class="a" style="left:314px;top:39.5px;width:452px;height:255.5px;background:#111111;"></div>
<div class="a" style="left:314px;top:289px;width:452px;height:5px;background:#191919;"></div>
<div class="a" style="left:314px;top:294px;width:452px;height:5px;background:#252525;"></div>
<div class="a" style="left:315px;top:299px;width:450px;height:7px;background:#2b9bd8;"></div>
<div class="a" style="left:315px;top:299px;width:27px;height:7px;background:#2888c4;"></div>
<div class="a" style="left:318px;top:300px;width:1px;height:5px;background:#e8f4ff;"></div>
<div class="a" style="left:345.0px;top:304px;width:0.6px;height:1.5px;background:#1a5a88;"></div>
<div class="a" style="left:355.5px;top:304px;width:0.6px;height:1.5px;background:#1a5a88;"></div>
<div class="a" style="left:366.0px;top:304px;width:0.6px;height:1.5px;background:#1a5a88;"></div>
<div class="a" style="left:376.5px;top:304px;width:0.6px;height:1.5px;background:#1a5a88;"></div>
<div class="a" style="left:387.0px;top:304px;width:0.6px;height:1.5px;background:#1a5a88;"></div>
<div class="a" style="left:397.5px;top:304px;width:0.6px;height:1.5px;background:#1a5a88;"></div>
<div class="a" style="left:408.0px;top:304px;width:0.6px;height:1.5px;background:#1a5a88;"></div>
<div class="a" style="left:418.5px;top:304px;width:0.6px;height:1.5px;background:#1a5a88;"></div>
<div class="a" style="left:429.0px;top:304px;width:0.6px;height:1.5px;background:#1a5a88;"></div>
<div class="a" style="left:439.5px;top:304px;width:0.6px;height:1.5px;background:#1a5a88;"></div>
<div class="a" style="left:450.0px;top:304px;width:0.6px;height:1.5px;background:#1a5a88;"></div>
<div class="a" style="left:460.5px;top:304px;width:0.6px;height:1.5px;background:#1a5a88;"></div>
<div class="a" style="left:471.0px;top:304px;width:0.6px;height:1.5px;background:#1a5a88;"></div>
<div class="a" style="left:481.5px;top:304px;width:0.6px;height:1.5px;background:#1a5a88;"></div>
<div class="a" style="left:492.0px;top:304px;width:0.6px;height:1.5px;background:#1a5a88;"></div>
<div class="a" style="left:502.5px;top:304px;width:0.6px;height:1.5px;background:#1a5a88;"></div>
<div class="a" style="left:513.0px;top:304px;width:0.6px;height:1.5px;background:#1a5a88;"></div>
<div class="a" style="left:523.5px;top:304px;width:0.6px;height:1.5px;background:#1a5a88;"></div>
<div class="a" style="left:534.0px;top:304px;width:0.6px;height:1.5px;background:#1a5a88;"></div>
<div class="a" style="left:544.5px;top:304px;width:0.6px;height:1.5px;background:#1a5a88;"></div>
<div class="a" style="left:555.0px;top:304px;width:0.6px;height:1.5px;background:#1a5a88;"></div>
<div class="a" style="left:565.5px;top:304px;width:0.6px;height:1.5px;background:#1a5a88;"></div>
<div class="a" style="left:576.0px;top:304px;width:0.6px;height:1.5px;background:#1a5a88;"></div>
<div class="a" style="left:586.5px;top:304px;width:0.6px;height:1.5px;background:#1a5a88;"></div>
<div class="a" style="left:597.0px;top:304px;width:0.6px;height:1.5px;background:#1a5a88;"></div>
<div class="a" style="left:607.5px;top:304px;width:0.6px;height:1.5px;background:#1a5a88;"></div>
<div class="a" style="left:618.0px;top:304px;width:0.6px;height:1.5px;background:#1a5a88;"></div>
<div class="a" style="left:628.5px;top:304px;width:0.6px;height:1.5px;background:#1a5a88;"></div>
<div class="a" style="left:639.0px;top:304px;width:0.6px;height:1.5px;background:#1a5a88;"></div>
<div class="a" style="left:649.5px;top:304px;width:0.6px;height:1.5px;background:#1a5a88;"></div>
<div class="a" style="left:660.0px;top:304px;width:0.6px;height:1.5px;background:#1a5a88;"></div>
<div class="a" style="left:670.5px;top:304px;width:0.6px;height:1.5px;background:#1a5a88;"></div>
<div class="a" style="left:681.0px;top:304px;width:0.6px;height:1.5px;background:#1a5a88;"></div>
<div class="a" style="left:691.5px;top:304px;width:0.6px;height:1.5px;background:#1a5a88;"></div>
<div class="a" style="left:702.0px;top:304px;width:0.6px;height:1.5px;background:#1a5a88;"></div>
<div class="a" style="left:712.5px;top:304px;width:0.6px;height:1.5px;background:#1a5a88;"></div>
<div class="a" style="left:723.0px;top:304px;width:0.6px;height:1.5px;background:#1a5a88;"></div>
<div class="a" style="left:733.5px;top:304px;width:0.6px;height:1.5px;background:#1a5a88;"></div>
<div class="a" style="left:744.0px;top:304px;width:0.6px;height:1.5px;background:#1a5a88;"></div>
<div class="a" style="left:754.5px;top:304px;width:0.6px;height:1.5px;background:#1a5a88;"></div>
<div class="a" style="left:314px;top:306px;width:452px;height:12px;background:#313131;"></div>
<div class="a" style="left:329px;top:309px;width:7px;height:6px;background:#666;border-radius:1px"></div>
<div class="a" style="left:368px;top:310px;width:7px;height:4px;background:#666;"></div>
<div class="t" style="left:405px;top:308.5px;font-size:5px;color:#888;">◀</div>
<div class="t" style="left:443px;top:308.5px;font-size:5px;color:#888;">▶</div>
<div class="a" style="left:442px;top:309px;width:0.8px;height:5px;background:#888;"></div>
<div class="t" style="left:482px;top:308px;font-size:6px;color:#999;">]</div>
<div class="t" style="left:537px;top:308.5px;font-size:5px;color:#999;">▶</div>
<div class="t" style="left:595px;top:308px;font-size:6px;color:#999;">[</div>
<div class="a" style="left:707px;top:309px;width:1px;height:6px;background:#3a9a4a;"></div>
<div class="t" style="left:709px;top:308.5px;font-size:4.5px;color:#3a9a4a;">◀</div>
<div class="a" style="left:708px;top:308px;width:4px;height:0px;background:#3a9a4a;"></div>
<div class="t" style="left:738px;top:308.5px;font-size:4.5px;color:#3a9a4a;">◀</div>
<div class="a" style="left:744px;top:309px;width:1px;height:6px;background:#3a9a4a;"></div>
<div class="a" style="left:766px;top:25px;width:34px;height:492px;background:#2d2d2d;"></div>
<div class="t" style="left:766px;width:34px;text-align:center;top:57.5px;font-size:4.3px;color:#e0e0e0;font-weight:bold">EDIT</div>
<div class="t" style="left:766px;width:34px;text-align:center;top:105.5px;font-size:4.3px;color:#e0e0e0;font-weight:bold">COLOR</div>
<div class="t" style="left:766px;width:34px;text-align:center;top:153.5px;font-size:4.3px;color:#e0e0e0;font-weight:bold">EFFECTS</div>
<div class="t" style="left:766px;width:34px;text-align:center;top:201.5px;font-size:4.3px;color:#e0e0e0;font-weight:bold">AUDIO</div>
<div class="t" style="left:766px;width:34px;text-align:center;top:252.5px;font-size:4.3px;color:#e0e0e0;font-weight:bold">AVIDASSI...</div>
<svg class="a" style="left:777px;top:36px" width="12" height="11" viewBox="0 0 12 11"><path d="M1 3h10M1 7h10" stroke="#ddd" stroke-width="1.4"/><rect x="3" y="1" width="3" height="4" fill="#ddd"/><rect x="6" y="5" width="3" height="4" fill="#ddd"/><path d="M6 0v11" stroke="#ddd" stroke-width="0.8"/></svg>
<svg class="a" style="left:777px;top:80px" width="13" height="14" viewBox="0 0 13 14"><path d="M2 12L9 4" stroke="#ddd" stroke-width="2.2" stroke-linecap="round"/><path d="M9 4l2-2" stroke="#ddd" stroke-width="1.4"/></svg>
<svg class="a" style="left:777px;top:131px" width="13" height="13" viewBox="0 0 13 13"><path d="M2 11L8 5" stroke="#ddd" stroke-width="1.6" stroke-linecap="round"/><path d="M9 1v2M11 4h-2M10.5 1.5l-1 1M5 2l1 1" stroke="#ddd" stroke-width="0.9"/></svg>
<svg class="a" style="left:777px;top:180px" width="12" height="11" viewBox="0 0 12 11"><path d="M1 5.5h1M2.5 4v3M4 2.5v6M5.5 1v9M7 2v7M8.5 3.5v4M10 5v1" stroke="#a8a8a8" stroke-width="1"/></svg>
<div class="a" style="left:777.5px;top:230.5px;width:10px;height:10px;background:#7c2ac0;border-radius:50%;box-shadow:0 0 3px 1px #4a1a70"></div>
<div class="a" style="left:781px;top:234px;width:3px;height:3px;background:#3a1a50;border-radius:50%"></div>
<div class="t" style="left:771px;top:261px;font-size:4px;color:#ccc;">◀</div>
<div class="a" style="left:779px;top:495px;width:8px;height:8px;background:#ddd;border-radius:50%"></div>
<div class="a" style="left:781.5px;top:497.5px;width:3px;height:3px;background:#2d2d2d;border-radius:50%"></div>
<div class="a" style="left:12px;top:322px;width:754px;height:195px;background:#2c2c2c;"></div>
<div class="a" style="left:12px;top:321px;width:754px;height:15px;background:#303030;"></div>
<div class="a" style="left:12px;top:321px;width:754px;height:4px;background:#2a2a2a;"></div>
<div class="a" style="left:22px;top:324.5px;width:91.5px;height:10px;background:#050505;"></div>
<div class="a" style="left:108px;top:326px;width:1.5px;height:6px;background:#4a1010;"></div>
<div class="t" style="left:14px;top:327px;font-size:5px;color:#666;">◀</div>
<div class="a" style="left:116.5px;top:327.4px;width:7px;height:4.6px;background:#8a8a8a;"></div>
<div class="a" style="left:118px;top:328.6px;width:4px;height:0.6px;background:#444;"></div>
<div class="a" style="left:118px;top:330.2px;width:4px;height:0.6px;background:#444;"></div>
<div class="a" style="left:127px;top:324px;width:14.7px;height:11.3px;background:#8c7212;border:0.7px solid #a88a20"></div>
<svg class="a" style="left:130px;top:327px" width="9" height="5" viewBox="0 0 9 5"><path d="M0.5 0.5h8L4.5 4.5z" fill="#f0a030"/><path d="M1 3.8h7" stroke="#f8d080" stroke-width="0.8"/></svg>
<div class="a" style="left:145px;top:329px;width:7.5px;height:2px;background:#d0a830;"></div>
<div class="a" style="left:153.5px;top:330px;width:1px;height:1px;background:#888;"></div>
<svg class="a" style="left:160px;top:327px" width="8" height="6" viewBox="0 0 8 6"><path d="M0.5 0.5L7.5 5.5M7.5 0.5L0.5 5.5" stroke="#a8a8a8" stroke-width="1.3"/></svg>
<svg class="a" style="left:174.5px;top:326px" width="8" height="7" viewBox="0 0 8 7"><path d="M0 1h8M4 1v6" stroke="#aaa" stroke-width="1.2"/><path d="M1 3l2 2M7 3l-2 2" stroke="#888" stroke-width="0.8"/></svg>
<div class="a" style="left:186.5px;top:324px;width:15.5px;height:11.3px;background:#8c7212;border:0.7px solid #a88a20"></div>
<div class="a" style="left:190px;top:327.3px;width:8px;height:1px;background:#f0dca0;"></div>
<div class="a" style="left:190px;top:329.2px;width:8px;height:1px;background:#f0dca0;"></div>
<div class="a" style="left:190px;top:331.1px;width:8px;height:1px;background:#f0dca0;"></div>
<div class="a" style="left:205px;top:327px;width:1.3px;height:6px;background:#999;"></div>
<div class="a" style="left:209.7px;top:327px;width:1.3px;height:6px;background:#999;"></div>
<div class="a" style="left:206px;top:327px;width:1px;height:1px;background:#999;"></div>
<div class="a" style="left:208.7px;top:332px;width:1px;height:1px;background:#999;"></div>
<div class="a" style="left:220.5px;top:326.5px;width:6.5px;height:7px;background:transparent;border:1.1px solid #999"></div>
<div class="a" style="left:222.5px;top:326.5px;width:2.5px;height:7px;background:#666;"></div>
<svg class="a" style="left:234px;top:327px" width="9" height="6" viewBox="0 0 9 6"><path d="M0 3h9M2 1L0 3l2 2M7 1l2 2-2 2" stroke="#999" stroke-width="1" fill="none"/></svg>
<div class="a" style="left:216px;top:324px;width:0.6px;height:11px;background:#262626;"></div>
<div class="a" style="left:248px;top:324px;width:0.6px;height:11px;background:#262626;"></div>
<div class="a" style="left:266px;top:328px;width:6px;height:4px;background:#8a8a8a;"></div>
<div class="a" style="left:281px;top:327px;width:7px;height:6px;background:transparent;border:1px solid #888"></div>
<div class="a" style="left:283px;top:329px;width:3px;height:2px;background:#888;"></div>
<svg class="a" style="left:309px;top:327px" width="8" height="6" viewBox="0 0 8 6"><path d="M0 1.5h8M0 4.5h8" stroke="#999" stroke-width="1"/><path d="M2 0l2 1.5-2 1.5M6 3l-2 1.5 2 1.5" stroke="#999" stroke-width="0.7" fill="none"/></svg>
<div class="a" style="left:326.5px;top:327.5px;width:7px;height:4.5px;background:transparent;border:1px solid #999;border-radius:2px"></div>
<div class="t" style="left:339.5px;top:325.8px;font-size:7.5px;color:#aaa;font-weight:bold">T</div>
<div class="a" style="left:356px;top:326.5px;width:7px;height:7px;background:#555;border:1px solid #aaa"></div>
<div class="a" style="left:359.5px;top:327px;width:3px;height:6px;background:#bbb;"></div>
<div class="a" style="left:371px;top:328.5px;width:7px;height:2.5px;background:#999;"></div>
<div class="a" style="left:370px;top:327.5px;width:1.2px;height:4.5px;background:#999;"></div>
<div class="a" style="left:387px;top:326.5px;width:6.5px;height:6.5px;background:transparent;border:1px solid #999;border-radius:50%"></div>
<div class="a" style="left:389px;top:329.5px;width:3px;height:0.8px;background:#999;transform:rotate(-45deg)"></div>
<svg class="a" style="left:401.5px;top:327px" width="7" height="6" viewBox="0 0 7 6"><path d="M0.5 0.5L3.5 5.5L6.5 0.5" stroke="#c8a830" stroke-width="1.1" fill="none"/></svg>
<div class="a" style="left:411.5px;top:324px;width:16px;height:11.3px;background:#8c7212;border:0.7px solid #a88a20"></div>
<div class="a" style="left:414.5px;top:326.5px;width:5px;height:4px;background:#f0dca0;transform:skewX(-20deg)"></div>
<div class="a" style="left:419.5px;top:329px;width:5px;height:3.5px;background:#e8a040;"></div>
<div class="a" style="left:430px;top:324px;width:1px;height:11px;background:#2c2c2c;"></div>
<div class="a" style="left:600px;top:324px;width:1px;height:11px;background:#2c2c2c;"></div>
<div class="a" style="left:610px;top:326px;width:7px;height:7px;background:transparent;border:1px solid #666;border-radius:50%"></div>
<div class="a" style="left:625px;top:326px;width:8px;height:7px;background:#8a3040;border-radius:2px"></div>
<div class="a" style="left:700px;top:324px;width:1px;height:11px;background:#2c2c2c;"></div>
<div class="a" style="left:12px;top:336px;width:754px;height:8.4px;background:#1e1e1e;"></div>
<div class="a" style="left:11px;top:335.7px;width:78px;height:8.7px;background:#050505;"></div>
<div class="t" style="left:33px;top:337.8px;font-size:6.3px;color:#2cc068;transform:scaleX(0.97);transform-origin:0 0;font-weight:bold;letter-spacing:0.35px">00:59:59:21</div>
<div class="a" style="left:89.5px;top:336px;width:7px;height:8px;background:#3a3a3a;"></div>
<div class="t" style="left:91px;top:337.5px;font-size:5.5px;color:#999;">+</div>
<div class="a" style="left:11px;top:344.4px;width:755px;height:7px;background:#5c2c74;"></div>
<div class="a" style="left:11px;top:351.3px;width:34px;height:42.0px;background:#5c2c74;"></div>
<div class="a" style="left:45px;top:351.3px;width:31px;height:42.0px;background:#2b6994;"></div>
<div class="a" style="left:76.4px;top:351.3px;width:5.6px;height:42.0px;background:#2b6994;"></div>
<div class="a" style="left:75.2px;top:351.3px;width:1.2px;height:42.0px;background:#262a30;"></div>
<div class="a" style="left:83.3px;top:351.3px;width:13px;height:42.0px;background:#353030;"></div>
<div class="a" style="left:83.3px;top:368.1px;width:13px;height:4.2px;background:#2b6994;"></div>
<div class="t" style="left:45px;width:30px;text-align:center;top:351.85px;font-size:3.3px;color:#d0dce8;font-weight:bold">V10</div>
<div class="t" style="left:77.8px;top:351.7px;font-size:3.4px;color:#cde;">✓</div>
<div class="a" style="left:88.3px;top:351.75px;width:3.2px;height:3.2px;background:transparent;border:0.6px solid #aaa;border-radius:50%"></div>
<div class="a" style="left:45px;top:355.2px;width:52px;height:0.6px;background:#1e2a34;"></div>
<div class="t" style="left:45px;width:30px;text-align:center;top:356.05px;font-size:3.3px;color:#d0dce8;font-weight:bold">V9</div>
<div class="t" style="left:77.8px;top:355.9px;font-size:3.4px;color:#cde;">✓</div>
<div class="a" style="left:88.3px;top:355.95px;width:3.2px;height:3.2px;background:transparent;border:0.6px solid #aaa;border-radius:50%"></div>
<div class="a" style="left:45px;top:359.4px;width:52px;height:0.6px;background:#1e2a34;"></div>
<div class="t" style="left:45px;width:30px;text-align:center;top:360.25px;font-size:3.3px;color:#d0dce8;font-weight:bold">V8</div>
<div class="t" style="left:77.8px;top:360.09999999999997px;font-size:3.4px;color:#cde;">✓</div>
<div class="a" style="left:88.3px;top:360.15px;width:3.2px;height:3.2px;background:transparent;border:0.6px solid #aaa;border-radius:50%"></div>
<div class="a" style="left:45px;top:363.6px;width:52px;height:0.6px;background:#1e2a34;"></div>
<div class="t" style="left:45px;width:30px;text-align:center;top:364.45000000000005px;font-size:3.3px;color:#d0dce8;font-weight:bold">V7</div>
<div class="t" style="left:77.8px;top:364.3px;font-size:3.4px;color:#cde;">✓</div>
<div class="a" style="left:88.3px;top:364.35px;width:3.2px;height:3.2px;background:transparent;border:0.6px solid #aaa;border-radius:50%"></div>
<div class="a" style="left:45px;top:367.8px;width:52px;height:0.6px;background:#1e2a34;"></div>
<div class="t" style="left:45px;width:30px;text-align:center;top:368.65000000000003px;font-size:3.3px;color:#d0dce8;font-weight:bold">V6</div>
<div class="t" style="left:77.8px;top:368.5px;font-size:3.4px;color:#cde;">✓</div>
<div class="a" style="left:88.3px;top:368.55px;width:3.2px;height:3.2px;background:transparent;border:0.6px solid #aaa;border-radius:50%"></div>
<div class="a" style="left:45px;top:372.0px;width:52px;height:0.6px;background:#1e2a34;"></div>
<div class="t" style="left:45px;width:30px;text-align:center;top:372.85px;font-size:3.3px;color:#d0dce8;font-weight:bold">V5</div>
<div class="t" style="left:77.8px;top:372.7px;font-size:3.4px;color:#cde;">✓</div>
<div class="a" style="left:88.3px;top:372.75px;width:3.2px;height:3.2px;background:transparent;border:0.6px solid #aaa;border-radius:50%"></div>
<div class="a" style="left:45px;top:376.2px;width:52px;height:0.6px;background:#1e2a34;"></div>
<div class="t" style="left:45px;width:30px;text-align:center;top:377.05px;font-size:3.3px;color:#d0dce8;font-weight:bold">V4 / Subs</div>
<div class="t" style="left:77.8px;top:376.9px;font-size:3.4px;color:#cde;">✓</div>
<div class="a" style="left:88.3px;top:376.95px;width:3.2px;height:3.2px;background:transparent;border:0.6px solid #aaa;border-radius:50%"></div>
<div class="a" style="left:45px;top:380.4px;width:52px;height:0.6px;background:#1e2a34;"></div>
<div class="t" style="left:45px;width:30px;text-align:center;top:381.25px;font-size:3.3px;color:#d0dce8;font-weight:bold">V3</div>
<div class="t" style="left:77.8px;top:381.09999999999997px;font-size:3.4px;color:#cde;">✓</div>
<div class="a" style="left:88.3px;top:381.15px;width:3.2px;height:3.2px;background:transparent;border:0.6px solid #aaa;border-radius:50%"></div>
<div class="a" style="left:45px;top:384.6px;width:52px;height:0.6px;background:#1e2a34;"></div>
<div class="t" style="left:45px;width:30px;text-align:center;top:385.45000000000005px;font-size:3.3px;color:#d0dce8;font-weight:bold">V2</div>
<div class="t" style="left:77.8px;top:385.3px;font-size:3.4px;color:#cde;">✓</div>
<div class="a" style="left:88.3px;top:385.35px;width:3.2px;height:3.2px;background:transparent;border:0.6px solid #aaa;border-radius:50%"></div>
<div class="a" style="left:45px;top:388.8px;width:52px;height:0.6px;background:#1e2a34;"></div>
<div class="t" style="left:45px;width:30px;text-align:center;top:389.65000000000003px;font-size:3.3px;color:#d0dce8;font-weight:bold">V1</div>
<div class="t" style="left:77.8px;top:389.5px;font-size:3.4px;color:#cde;">✓</div>
<div class="a" style="left:88.3px;top:389.55px;width:3.2px;height:3.2px;background:transparent;border:0.6px solid #aaa;border-radius:50%"></div>
<div class="a" style="left:11px;top:389.2px;width:15.5px;height:4.1px;background:#2e8a62;"></div>
<div class="t" style="left:15px;top:389.5px;font-size:3.5px;color:#cfe;">▢</div>
<div class="a" style="left:26.5px;top:389.2px;width:18px;height:4.1px;background:#3a3a3a;"></div>
<div class="t" style="left:32px;top:389.6px;font-size:3.3px;color:#bbb;">V1</div>
<div class="a" style="left:11px;top:393.3px;width:34px;height:7.7px;background:#5c2c74;"></div>
<div class="a" style="left:45px;top:393.3px;width:31px;height:7.7px;background:#333;"></div>
<div class="t" style="left:55px;top:395.3px;font-size:5px;color:#d0d0d0;transform:scaleX(0.95);transform-origin:0 0;">TC1</div>
<div class="a" style="left:76.4px;top:393.3px;width:6.6px;height:7.7px;background:#333;"></div>
<div class="t" style="left:77.5px;top:395px;font-size:4.5px;color:#aaa;">✓</div>
<div class="a" style="left:83.3px;top:393.3px;width:13.7px;height:7.7px;background:#2b6994;"></div>
<div class="a" style="left:11px;top:401px;width:86px;height:13px;background:#2e2e2e;"></div>
<div class="a" style="left:11px;top:413.4px;width:86px;height:0.7px;background:#222;"></div>
<div class="a" style="left:75.8px;top:401px;width:6.2px;height:13px;background:#2b6994;"></div>
<div class="a" style="left:27px;top:401px;width:0.6px;height:13px;background:#262626;"></div>
<div class="a" style="left:44.5px;top:401px;width:0.6px;height:13px;background:#262626;"></div>
<div class="a" style="left:68.5px;top:401px;width:0.6px;height:13px;background:#2a2424;"></div>
<div class="t" style="left:57px;top:404.8px;font-size:5.4px;color:#d8d8d8;transform:scaleX(0.9);transform-origin:0 0;">A1</div>
<svg class="a" style="left:46px;top:405.6px" width="4" height="4.5" viewBox="0 0 4 4.5"><path d="M0 1.5h1.3L3.5 0v4.5L1.3 3H0z" fill="#ccc"/></svg>
<div class="t" style="left:77.2px;top:405.2px;font-size:4.2px;color:#cde;">✓</div>
<div class="t" style="left:85.3px;top:405.5px;font-size:4.5px;color:#aaa;">s</div>
<div class="t" style="left:91.5px;top:405.5px;font-size:4.5px;color:#aaa;">m</div>
<div class="t" style="left:14.3px;top:405.5px;font-size:4.5px;color:#aaa;">s</div>
<div class="t" style="left:20.7px;top:405.5px;font-size:4.5px;color:#aaa;">m</div>
<div class="t" style="left:32px;top:404.8px;font-size:5.4px;color:#d8d8d8;transform:scaleX(0.9);transform-origin:0 0;">A1</div>
<svg class="a" style="left:38px;top:405.6px" width="4" height="4.5" viewBox="0 0 4 4.5"><path d="M0 1.5h1.3L3.5 0v4.5L1.3 3H0z" fill="#ccc"/></svg>
<div class="a" style="left:11px;top:414px;width:86px;height:13.5px;background:#2e2e2e;"></div>
<div class="a" style="left:11px;top:426.9px;width:86px;height:0.7px;background:#222;"></div>
<div class="a" style="left:75.8px;top:414px;width:6.2px;height:13.5px;background:#2b6994;"></div>
<div class="a" style="left:27px;top:414px;width:0.6px;height:13.5px;background:#262626;"></div>
<div class="a" style="left:44.5px;top:414px;width:0.6px;height:13.5px;background:#262626;"></div>
<div class="a" style="left:68.5px;top:414px;width:0.6px;height:13.5px;background:#2a2424;"></div>
<div class="t" style="left:57px;top:418.05px;font-size:5.4px;color:#d8d8d8;transform:scaleX(0.9);transform-origin:0 0;">A2</div>
<svg class="a" style="left:46px;top:418.85px" width="4" height="4.5" viewBox="0 0 4 4.5"><path d="M0 1.5h1.3L3.5 0v4.5L1.3 3H0z" fill="#ccc"/></svg>
<div class="t" style="left:77.2px;top:418.45px;font-size:4.2px;color:#cde;">✓</div>
<div class="t" style="left:85.3px;top:418.75px;font-size:4.5px;color:#aaa;">s</div>
<div class="t" style="left:91.5px;top:418.75px;font-size:4.5px;color:#aaa;">m</div>
<div class="t" style="left:14.3px;top:418.75px;font-size:4.5px;color:#aaa;">s</div>
<div class="t" style="left:20.7px;top:418.75px;font-size:4.5px;color:#aaa;">m</div>
<div class="t" style="left:32px;top:418.05px;font-size:5.4px;color:#d8d8d8;transform:scaleX(0.9);transform-origin:0 0;">A2</div>
<svg class="a" style="left:38px;top:418.85px" width="4" height="4.5" viewBox="0 0 4 4.5"><path d="M0 1.5h1.3L3.5 0v4.5L1.3 3H0z" fill="#ccc"/></svg>
<div class="a" style="left:11px;top:427.5px;width:86px;height:13.5px;background:#2e2e2e;"></div>
<div class="a" style="left:11px;top:440.4px;width:86px;height:0.7px;background:#222;"></div>
<div class="a" style="left:75.8px;top:427.5px;width:6.2px;height:13.5px;background:#2b6994;"></div>
<div class="a" style="left:27px;top:427.5px;width:0.6px;height:13.5px;background:#262626;"></div>
<div class="a" style="left:44.5px;top:427.5px;width:0.6px;height:13.5px;background:#262626;"></div>
<div class="a" style="left:68.5px;top:427.5px;width:0.6px;height:13.5px;background:#2a2424;"></div>
<div class="t" style="left:57px;top:431.55px;font-size:5.4px;color:#d8d8d8;transform:scaleX(0.9);transform-origin:0 0;">A3</div>
<svg class="a" style="left:46px;top:432.35px" width="4" height="4.5" viewBox="0 0 4 4.5"><path d="M0 1.5h1.3L3.5 0v4.5L1.3 3H0z" fill="#ccc"/></svg>
<div class="t" style="left:77.2px;top:431.95px;font-size:4.2px;color:#cde;">✓</div>
<div class="t" style="left:85.3px;top:432.25px;font-size:4.5px;color:#aaa;">s</div>
<div class="t" style="left:91.5px;top:432.25px;font-size:4.5px;color:#aaa;">m</div>
<div class="t" style="left:14.3px;top:432.25px;font-size:4.5px;color:#aaa;">s</div>
<div class="t" style="left:20.7px;top:432.25px;font-size:4.5px;color:#aaa;">m</div>
<div class="t" style="left:32px;top:431.55px;font-size:5.4px;color:#d8d8d8;transform:scaleX(0.9);transform-origin:0 0;">A3</div>
<svg class="a" style="left:38px;top:432.35px" width="4" height="4.5" viewBox="0 0 4 4.5"><path d="M0 1.5h1.3L3.5 0v4.5L1.3 3H0z" fill="#ccc"/></svg>
<div class="a" style="left:11px;top:441px;width:86px;height:13px;background:#2e2e2e;"></div>
<div class="a" style="left:11px;top:453.4px;width:86px;height:0.7px;background:#222;"></div>
<div class="a" style="left:75.8px;top:441px;width:6.2px;height:13px;background:#2b6994;"></div>
<div class="a" style="left:27px;top:441px;width:0.6px;height:13px;background:#262626;"></div>
<div class="a" style="left:44.5px;top:441px;width:0.6px;height:13px;background:#262626;"></div>
<div class="a" style="left:68.5px;top:441px;width:0.6px;height:13px;background:#2a2424;"></div>
<div class="t" style="left:57px;top:444.8px;font-size:5.4px;color:#d8d8d8;transform:scaleX(0.9);transform-origin:0 0;">A4</div>
<svg class="a" style="left:46px;top:445.6px" width="4" height="4.5" viewBox="0 0 4 4.5"><path d="M0 1.5h1.3L3.5 0v4.5L1.3 3H0z" fill="#ccc"/></svg>
<div class="t" style="left:77.2px;top:445.2px;font-size:4.2px;color:#cde;">✓</div>
<div class="t" style="left:85.3px;top:445.5px;font-size:4.5px;color:#aaa;">s</div>
<div class="t" style="left:91.5px;top:445.5px;font-size:4.5px;color:#aaa;">m</div>
<div class="t" style="left:14.3px;top:445.5px;font-size:4.5px;color:#aaa;">s</div>
<div class="t" style="left:20.7px;top:445.5px;font-size:4.5px;color:#aaa;">m</div>
<div class="t" style="left:32px;top:444.8px;font-size:5.4px;color:#d8d8d8;transform:scaleX(0.9);transform-origin:0 0;">A4</div>
<svg class="a" style="left:38px;top:445.6px" width="4" height="4.5" viewBox="0 0 4 4.5"><path d="M0 1.5h1.3L3.5 0v4.5L1.3 3H0z" fill="#ccc"/></svg>
<div class="a" style="left:11px;top:454px;width:86px;height:15px;background:#2e2e2e;"></div>
<div class="a" style="left:11px;top:468.4px;width:86px;height:0.7px;background:#222;"></div>
<div class="a" style="left:75.8px;top:454px;width:6.2px;height:15px;background:#2b6994;"></div>
<div class="a" style="left:27px;top:454px;width:0.6px;height:15px;background:#262626;"></div>
<div class="a" style="left:44.5px;top:454px;width:0.6px;height:15px;background:#262626;"></div>
<div class="a" style="left:68.5px;top:454px;width:0.6px;height:15px;background:#2a2424;"></div>
<div class="t" style="left:57px;top:458.8px;font-size:5.4px;color:#d8d8d8;transform:scaleX(0.9);transform-origin:0 0;">A5</div>
<svg class="a" style="left:46px;top:459.6px" width="4" height="4.5" viewBox="0 0 4 4.5"><path d="M0 1.5h1.3L3.5 0v4.5L1.3 3H0z" fill="#ccc"/></svg>
<div class="t" style="left:77.2px;top:459.2px;font-size:4.2px;color:#cde;">✓</div>
<div class="t" style="left:85.3px;top:459.5px;font-size:4.5px;color:#aaa;">s</div>
<div class="t" style="left:91.5px;top:459.5px;font-size:4.5px;color:#aaa;">m</div>
<div class="a" style="left:11px;top:469px;width:86px;height:15px;background:#2e2e2e;"></div>
<div class="a" style="left:11px;top:483.4px;width:86px;height:0.7px;background:#222;"></div>
<div class="a" style="left:75.8px;top:469px;width:6.2px;height:15px;background:#2b6994;"></div>
<div class="a" style="left:27px;top:469px;width:0.6px;height:15px;background:#262626;"></div>
<div class="a" style="left:44.5px;top:469px;width:0.6px;height:15px;background:#262626;"></div>
<div class="a" style="left:68.5px;top:469px;width:0.6px;height:15px;background:#2a2424;"></div>
<div class="t" style="left:57px;top:473.8px;font-size:5.4px;color:#d8d8d8;transform:scaleX(0.9);transform-origin:0 0;">A6</div>
<svg class="a" style="left:46px;top:474.6px" width="4" height="4.5" viewBox="0 0 4 4.5"><path d="M0 1.5h1.3L3.5 0v4.5L1.3 3H0z" fill="#ccc"/></svg>
<div class="t" style="left:77.2px;top:474.2px;font-size:4.2px;color:#cde;">✓</div>
<div class="t" style="left:85.3px;top:474.5px;font-size:4.5px;color:#aaa;">s</div>
<div class="t" style="left:91.5px;top:474.5px;font-size:4.5px;color:#aaa;">m</div>
<div class="a" style="left:11px;top:484px;width:86px;height:15px;background:#2e2e2e;"></div>
<div class="a" style="left:11px;top:498.4px;width:86px;height:0.7px;background:#222;"></div>
<div class="a" style="left:75.8px;top:484px;width:6.2px;height:15px;background:#2b6994;"></div>
<div class="a" style="left:27px;top:484px;width:0.6px;height:15px;background:#262626;"></div>
<div class="a" style="left:44.5px;top:484px;width:0.6px;height:15px;background:#262626;"></div>
<div class="a" style="left:68.5px;top:484px;width:0.6px;height:15px;background:#2a2424;"></div>
<div class="t" style="left:57px;top:488.8px;font-size:5.4px;color:#d8d8d8;transform:scaleX(0.9);transform-origin:0 0;">A7</div>
<svg class="a" style="left:46px;top:489.6px" width="4" height="4.5" viewBox="0 0 4 4.5"><path d="M0 1.5h1.3L3.5 0v4.5L1.3 3H0z" fill="#ccc"/></svg>
<div class="t" style="left:77.2px;top:489.2px;font-size:4.2px;color:#cde;">✓</div>
<div class="t" style="left:85.3px;top:489.5px;font-size:4.5px;color:#aaa;">s</div>
<div class="t" style="left:91.5px;top:489.5px;font-size:4.5px;color:#aaa;">m</div>
<div class="a" style="left:11px;top:454px;width:33.5px;height:50px;background:#5c2c74;"></div>
<div class="a" style="left:97px;top:344.4px;width:2px;height:160.6px;background:#5c2c74;"></div>
<div class="a" style="left:99px;top:351.3px;width:658px;height:42.0px;background:#2a2a2a;"></div>
<div class="a" style="left:99px;top:355.2px;width:658px;height:0.6px;background:#242424;"></div>
<div class="a" style="left:99px;top:359.4px;width:658px;height:0.6px;background:#242424;"></div>
<div class="a" style="left:99px;top:363.6px;width:658px;height:0.6px;background:#242424;"></div>
<div class="a" style="left:99px;top:367.8px;width:658px;height:0.6px;background:#242424;"></div>
<div class="a" style="left:99px;top:372.0px;width:658px;height:0.6px;background:#242424;"></div>
<div class="a" style="left:99px;top:376.2px;width:658px;height:0.6px;background:#242424;"></div>
<div class="a" style="left:99px;top:380.4px;width:658px;height:0.6px;background:#242424;"></div>
<div class="a" style="left:99px;top:384.6px;width:658px;height:0.6px;background:#242424;"></div>
<div class="a" style="left:99px;top:388.8px;width:658px;height:0.6px;background:#242424;"></div>
<div class="a" style="left:99px;top:393.3px;width:658px;height:6.9px;background:#b133e6;"></div>
<div class="a" style="left:99px;top:401px;width:658px;height:13px;background:linear-gradient(#323232,#2b2b2b);"></div>
<div class="a" style="left:99px;top:413.3px;width:658px;height:0.7px;background:#232323;"></div>
<div class="a" style="left:99px;top:401px;width:658px;height:0.6px;background:#383838;"></div>
<div class="a" style="left:99px;top:414px;width:658px;height:13.5px;background:linear-gradient(#323232,#2b2b2b);"></div>
<div class="a" style="left:99px;top:426.8px;width:658px;height:0.7px;background:#232323;"></div>
<div class="a" style="left:99px;top:414px;width:658px;height:0.6px;background:#383838;"></div>
<div class="a" style="left:99px;top:427.5px;width:658px;height:13.5px;background:linear-gradient(#323232,#2b2b2b);"></div>
<div class="a" style="left:99px;top:440.3px;width:658px;height:0.7px;background:#232323;"></div>
<div class="a" style="left:99px;top:427.5px;width:658px;height:0.6px;background:#383838;"></div>
<div class="a" style="left:99px;top:441px;width:658px;height:13px;background:linear-gradient(#323232,#2b2b2b);"></div>
<div class="a" style="left:99px;top:453.3px;width:658px;height:0.7px;background:#232323;"></div>
<div class="a" style="left:99px;top:441px;width:658px;height:0.6px;background:#383838;"></div>
<div class="a" style="left:99px;top:454px;width:658px;height:15px;background:linear-gradient(#323232,#2b2b2b);"></div>
<div class="a" style="left:99px;top:468.3px;width:658px;height:0.7px;background:#232323;"></div>
<div class="a" style="left:99px;top:454px;width:658px;height:0.6px;background:#383838;"></div>
<div class="a" style="left:99px;top:469px;width:658px;height:15px;background:linear-gradient(#323232,#2b2b2b);"></div>
<div class="a" style="left:99px;top:483.3px;width:658px;height:0.7px;background:#232323;"></div>
<div class="a" style="left:99px;top:469px;width:658px;height:0.6px;background:#383838;"></div>
<div class="a" style="left:99px;top:484px;width:658px;height:15px;background:linear-gradient(#323232,#2b2b2b);"></div>
<div class="a" style="left:99px;top:498.3px;width:658px;height:0.7px;background:#232323;"></div>
<div class="a" style="left:99px;top:484px;width:658px;height:0.6px;background:#383838;"></div>
<div class="t" style="left:99px;top:338.6px;font-size:5.4px;color:#f0f0f0;transform:scaleX(0.95);transform-origin:0 0;">8:00</div>
<div class="t" style="left:99px;top:394.8px;font-size:5.4px;color:#f0d8ff;transform:scaleX(0.95);transform-origin:0 0;">8:00</div>
<div class="t" style="left:185px;top:338.6px;font-size:5.4px;color:#f0f0f0;transform:scaleX(0.95);transform-origin:0 0;">01:00:03:00</div>
<div class="t" style="left:185px;top:394.8px;font-size:5.4px;color:#f0d8ff;transform:scaleX(0.95);transform-origin:0 0;">01:00:03:00</div>
<div class="a" style="left:200px;top:335.6px;width:0.8px;height:1.6px;background:#ddd;"></div>
<div class="t" style="left:289px;top:338.6px;font-size:5.4px;color:#f0f0f0;transform:scaleX(0.95);transform-origin:0 0;">01:00:08:00</div>
<div class="t" style="left:289px;top:394.8px;font-size:5.4px;color:#f0d8ff;transform:scaleX(0.95);transform-origin:0 0;">01:00:08:00</div>
<div class="a" style="left:304px;top:335.6px;width:0.8px;height:1.6px;background:#ddd;"></div>
<div class="t" style="left:392px;top:338.6px;font-size:5.4px;color:#f0f0f0;transform:scaleX(0.95);transform-origin:0 0;">01:00:13:00</div>
<div class="t" style="left:392px;top:394.8px;font-size:5.4px;color:#f0d8ff;transform:scaleX(0.95);transform-origin:0 0;">01:00:13:00</div>
<div class="a" style="left:407px;top:335.6px;width:0.8px;height:1.6px;background:#ddd;"></div>
<div class="t" style="left:495px;top:338.6px;font-size:5.4px;color:#f0f0f0;transform:scaleX(0.95);transform-origin:0 0;">01:00:18:00</div>
<div class="t" style="left:495px;top:394.8px;font-size:5.4px;color:#f0d8ff;transform:scaleX(0.95);transform-origin:0 0;">01:00:18:00</div>
<div class="a" style="left:510px;top:335.6px;width:0.8px;height:1.6px;background:#ddd;"></div>
<div class="t" style="left:597px;top:338.6px;font-size:5.4px;color:#f0f0f0;transform:scaleX(0.95);transform-origin:0 0;">01:00:23:00</div>
<div class="t" style="left:597px;top:394.8px;font-size:5.4px;color:#f0d8ff;transform:scaleX(0.95);transform-origin:0 0;">01:00:23:00</div>
<div class="a" style="left:612px;top:335.6px;width:0.8px;height:1.6px;background:#ddd;"></div>
<div class="t" style="left:700px;top:338.6px;font-size:5.4px;color:#f0f0f0;transform:scaleX(0.95);transform-origin:0 0;">01:00:28:00</div>
<div class="t" style="left:700px;top:394.8px;font-size:5.4px;color:#f0d8ff;transform:scaleX(0.95);transform-origin:0 0;">01:00:28:00</div>
<div class="a" style="left:715px;top:335.6px;width:0.8px;height:1.6px;background:#ddd;"></div>
<div class="a" style="left:99.5px;top:335.5px;width:0.8px;height:2px;background:#ddd;"></div>
<div class="a" style="left:99.7px;top:351.45px;width:657.3px;height:3.9000000000000004px;background:#1d99a6;"></div>
<div class="t" style="left:102px;top:351.7px;font-size:3.5px;color:#eef;font-weight:bold">Filler</div>
<div class="a" style="left:99.7px;top:355.65px;width:657.3px;height:3.9000000000000004px;background:#1d99a6;"></div>
<div class="t" style="left:102px;top:355.9px;font-size:3.5px;color:#eef;font-weight:bold">Filler</div>
<div class="a" style="left:99.7px;top:359.84999999999997px;width:657.3px;height:3.9000000000000004px;background:#1d99a6;"></div>
<div class="t" style="left:102px;top:360.09999999999997px;font-size:3.5px;color:#eef;font-weight:bold">Filler</div>
<div class="a" style="left:565.5px;top:365px;width:53.5px;height:3.6px;background:#1d99a6;"></div>
<div class="a" style="left:568.5px;top:365.4px;width:3.5px;height:2.8px;background:#c040c0;"></div>
<div class="a" style="left:607px;top:365.4px;width:3.5px;height:2.8px;background:#c040c0;"></div>
<div class="a" style="left:593.5px;top:365.4px;width:3.5px;height:2.8px;background:#c040c0;"></div>
<div class="t" style="left:573.5px;top:365.2px;font-size:3px;color:#fff;">Music 1.2</div>
<div class="a" style="left:644px;top:365px;width:54px;height:3.6px;background:#1d99a6;"></div>
<div class="a" style="left:647px;top:365.4px;width:3.5px;height:2.8px;background:#c040c0;"></div>
<div class="a" style="left:686px;top:365.4px;width:3.5px;height:2.8px;background:#c040c0;"></div>
<div class="a" style="left:672px;top:365.4px;width:3.5px;height:2.8px;background:#c040c0;"></div>
<div class="t" style="left:652px;top:365.2px;font-size:3px;color:#fff;">Music 1.2</div>
<div class="a" style="left:727px;top:365px;width:30px;height:3.6px;background:#1d99a6;"></div>
<div class="a" style="left:730px;top:365.4px;width:3.5px;height:2.8px;background:#c040c0;"></div>
<div class="a" style="left:745px;top:365.4px;width:3.5px;height:2.8px;background:#c040c0;"></div>
<div class="a" style="left:755px;top:365.4px;width:3.5px;height:2.8px;background:#c040c0;"></div>
<div class="t" style="left:735px;top:365.2px;font-size:3px;color:#fff;">Music 1.2</div>
<div class="a" style="left:140.2px;top:376.8px;width:387px;height:4.3px;background:#1d99a6;"></div>
<div class="t" style="left:142px;top:377px;font-size:4.1px;color:#f0ffff;font-weight:bold">KFK_OPENING_HANDHELD_V02</div>
<div class="a" style="left:99px;top:376.8px;width:1px;height:0px;background:#1d99a6;"></div>
<div class="a" style="left:140.2px;top:389.2px;width:120px;height:4.1px;background:#1d99a6;"></div>
<div class="t" style="left:142px;top:389.3px;font-size:4px;color:#f0ffff;transform:scaleX(0.95);transform-origin:0 0;font-weight:bold">068681757-bowty-art... beautiful-sunrise-t.new.01</div>
<div class="a" style="left:223px;top:389.6px;width:3px;height:3px;background:#c040c0;"></div>
<div class="a" style="left:262px;top:389.2px;width:87px;height:4.1px;background:#e0586e;"></div>
<div class="t" style="left:266px;top:389.3px;font-size:4px;color:#5a1020;font-weight:bold">1:44:16 MOS</div>
<div class="a" style="left:349.5px;top:389.2px;width:62px;height:4.1px;background:#e0586e;"></div>
<div class="t" style="left:352px;top:389.3px;font-size:4px;color:#5a1020;font-weight:bold">1:44:26 MOS</div>
<div class="a" style="left:416px;top:389.2px;width:83px;height:4.1px;background:#1d99a6;"></div>
<div class="t" style="left:422px;top:389.3px;font-size:3.5px;color:#fff;">artifacts 1104</div>
<div class="a" style="left:418px;top:389.6px;width:3px;height:3px;background:#c040c0;"></div>
<div class="a" style="left:437px;top:389.6px;width:3px;height:3px;background:#c040c0;"></div>
<div class="a" style="left:492px;top:389.6px;width:3px;height:3px;background:#c040c0;"></div>
<div class="a" style="left:527px;top:389.2px;width:230px;height:4.1px;background:#28a07c;"></div>
<div class="t" style="left:545px;top:389.3px;font-size:3.5px;color:#dfe;">1B_41.2a</div>
<div class="a" style="left:204.4px;top:401px;width:125.20000000000002px;height:13px;background:#e6c21a;"></div>
<div class="a" style="left:204.4px;top:414px;width:125.20000000000002px;height:13px;background:#e6c21a;"></div>
<svg class="a" style="left:207px;top:401.3px" width="29" height="11.5" viewBox="0 0 100 11.5" preserveAspectRatio="none"><path d="M0 1.5 L10 0.8 L30 1.6 L50 0.6 L70 1.4 L88 0.8 L94 3 L100 5.7 L94 8.5 L88 10.6 L70 10 L50 10.8 L30 10 L10 10.7 L0 10Z" fill="#707072"/></svg>
<svg class="a" style="left:252.5px;top:401.3px" width="30.5" height="11.5" viewBox="0 0 100 11.5" preserveAspectRatio="none"><path d="M0 1.5 L10 0.8 L30 1.6 L50 0.6 L70 1.4 L88 0.8 L94 3 L100 5.7 L94 8.5 L88 10.6 L70 10 L50 10.8 L30 10 L10 10.7 L0 10Z" fill="#707072"/></svg>
<svg class="a" style="left:286.7px;top:401.3px" width="36.80000000000001" height="11.5" viewBox="0 0 100 11.5" preserveAspectRatio="none"><path d="M0 1.5 L10 0.8 L30 1.6 L50 0.6 L70 1.4 L88 0.8 L94 3 L100 5.7 L94 8.5 L88 10.6 L70 10 L50 10.8 L30 10 L10 10.7 L0 10Z" fill="#707072"/></svg>
<div class="a" style="left:204.4px;top:413.5px;width:125.20000000000002px;height:0.7px;background:#8a7410;"></div>
<div class="a" style="left:205.4px;top:420.2px;width:123.20000000000002px;height:0.7px;background:#9a8418;"></div>
<div class="a" style="left:205.4px;top:407px;width:123.20000000000002px;height:0.6px;background:#8a7a30;"></div>
<div class="t" style="left:207.4px;top:403.8px;font-size:5px;color:#2a2a2a;transform:scaleX(0.85);transform-origin:0 0;font-weight:bold">KFK-VO-CORY V2.wav</div>
<div class="t" style="left:207.4px;top:416.8px;font-size:5px;color:#2a2a2a;transform:scaleX(0.85);transform-origin:0 0;font-weight:bold">KFK-VO-CORY V2.wav</div>
<div class="a" style="left:206.9px;top:409.5px;width:3px;height:3px;background:transparent;border:0.7px solid #333;border-radius:50%"></div>
<div class="a" style="left:206.9px;top:423px;width:3px;height:3px;background:transparent;border:0.7px solid #333;border-radius:50%"></div>
<div class="a" style="left:356px;top:401px;width:64px;height:13px;background:#e6c21a;"></div>
<div class="a" style="left:356px;top:414px;width:64px;height:13px;background:#e6c21a;"></div>
<svg class="a" style="left:358.7px;top:401.3px" width="41.30000000000001" height="11.5" viewBox="0 0 100 11.5" preserveAspectRatio="none"><path d="M0 1.5 L10 0.8 L30 1.6 L50 0.6 L70 1.4 L88 0.8 L94 3 L100 5.7 L94 8.5 L88 10.6 L70 10 L50 10.8 L30 10 L10 10.7 L0 10Z" fill="#707072"/></svg>
<div class="a" style="left:356px;top:413.5px;width:64px;height:0.7px;background:#8a7410;"></div>
<div class="a" style="left:357px;top:420.2px;width:62px;height:0.7px;background:#9a8418;"></div>
<div class="a" style="left:357px;top:407px;width:62px;height:0.6px;background:#8a7a30;"></div>
<div class="t" style="left:359px;top:403.8px;font-size:5px;color:#2a2a2a;transform:scaleX(0.85);transform-origin:0 0;font-weight:bold">KFK-VO-CORY V2.wav</div>
<div class="t" style="left:359px;top:416.8px;font-size:5px;color:#2a2a2a;transform:scaleX(0.85);transform-origin:0 0;font-weight:bold">KFK-VO-CORY V2.wav</div>
<div class="a" style="left:358.5px;top:409.5px;width:3px;height:3px;background:transparent;border:0.7px solid #333;border-radius:50%"></div>
<div class="a" style="left:358.5px;top:423px;width:3px;height:3px;background:transparent;border:0.7px solid #333;border-radius:50%"></div>
<div class="a" style="left:463px;top:401px;width:64px;height:13px;background:#1f9f8f;"></div>
<div class="a" style="left:463px;top:414px;width:64px;height:13px;background:#1f9f8f;"></div>
<div class="a" style="left:463px;top:413.5px;width:64px;height:0.7px;background:#0f6058;"></div>
<div class="t" style="left:465px;top:403.8px;font-size:5px;color:#f0fff8;transform:scaleX(0.9);transform-origin:0 0;">1B_41.2a</div>
<div class="t" style="left:465px;top:416.8px;font-size:5px;color:#f0fff8;transform:scaleX(0.9);transform-origin:0 0;">1B_41.2a</div>
<div class="a" style="left:465.5px;top:409.5px;width:3px;height:3px;background:transparent;border:0.7px solid #eee;border-radius:50%"></div>
<div class="a" style="left:465.5px;top:423px;width:3px;height:3px;background:transparent;border:0.7px solid #eee;border-radius:50%"></div>
<div class="a" style="left:478px;top:404px;width:10px;height:7px;background:#3a1a40;border:1.5px solid #c848d8"></div>
<div class="a" style="left:478px;top:417px;width:10px;height:7px;background:#3a1a40;border:1.5px solid #c848d8"></div>
<div class="a" style="left:567px;top:401px;width:24px;height:13px;background:#1f9f8f;"></div>
<div class="a" style="left:567px;top:414px;width:24px;height:13px;background:#1f9f8f;"></div>
<div class="a" style="left:567px;top:413.5px;width:24px;height:0.7px;background:#0f6058;"></div>
<div class="t" style="left:569px;top:403.8px;font-size:5px;color:#f0fff8;transform:scaleX(0.9);transform-origin:0 0;">1B_41.2a</div>
<div class="t" style="left:569px;top:416.8px;font-size:5px;color:#f0fff8;transform:scaleX(0.9);transform-origin:0 0;">1B_41.2a</div>
<div class="a" style="left:569.5px;top:409.5px;width:3px;height:3px;background:transparent;border:0.7px solid #eee;border-radius:50%"></div>
<div class="a" style="left:569.5px;top:423px;width:3px;height:3px;background:transparent;border:0.7px solid #eee;border-radius:50%"></div>
<div class="a" style="left:595px;top:401px;width:162px;height:13px;background:#1f9f8f;"></div>
<div class="a" style="left:595px;top:414px;width:162px;height:13px;background:#1f9f8f;"></div>
<div class="a" style="left:595px;top:413.5px;width:162px;height:0.7px;background:#0f6058;"></div>
<div class="t" style="left:597px;top:403.8px;font-size:5px;color:#f0fff8;transform:scaleX(0.9);transform-origin:0 0;">1B_41.2a</div>
<div class="t" style="left:597px;top:416.8px;font-size:5px;color:#f0fff8;transform:scaleX(0.9);transform-origin:0 0;">1B_41.2a</div>
<div class="a" style="left:597.5px;top:409.5px;width:3px;height:3px;background:transparent;border:0.7px solid #eee;border-radius:50%"></div>
<div class="a" style="left:597.5px;top:423px;width:3px;height:3px;background:transparent;border:0.7px solid #eee;border-radius:50%"></div>
<svg class="a" style="left:503px;top:402px" width="24" height="10" viewBox="0 0 100 10" preserveAspectRatio="none"><path d="M0 4 L10 1 L30 3 L50 0.5 L70 2.5 L90 1 L100 5 L90 9 L70 7.5 L50 9.5 L30 7 L10 9 L0 6Z" fill="#7a6a6a" opacity=".75"/></svg>
<svg class="a" style="left:620px;top:402px" width="14" height="10" viewBox="0 0 100 10" preserveAspectRatio="none"><path d="M0 4 L10 1 L30 3 L50 0.5 L70 2.5 L90 1 L100 5 L90 9 L70 7.5 L50 9.5 L30 7 L10 9 L0 6Z" fill="#7a6a6a" opacity=".75"/></svg>
<svg class="a" style="left:640px;top:402px" width="20" height="10" viewBox="0 0 100 10" preserveAspectRatio="none"><path d="M0 4 L10 1 L30 3 L50 0.5 L70 2.5 L90 1 L100 5 L90 9 L70 7.5 L50 9.5 L30 7 L10 9 L0 6Z" fill="#7a6a6a" opacity=".75"/></svg>
<svg class="a" style="left:690px;top:402px" width="45" height="10" viewBox="0 0 100 10" preserveAspectRatio="none"><path d="M0 4 L10 1 L30 3 L50 0.5 L70 2.5 L90 1 L100 5 L90 9 L70 7.5 L50 9.5 L30 7 L10 9 L0 6Z" fill="#7a6a6a" opacity=".75"/></svg>
<svg class="a" style="left:740px;top:402px" width="15" height="10" viewBox="0 0 100 10" preserveAspectRatio="none"><path d="M0 4 L10 1 L30 3 L50 0.5 L70 2.5 L90 1 L100 5 L90 9 L70 7.5 L50 9.5 L30 7 L10 9 L0 6Z" fill="#7a6a6a" opacity=".75"/></svg>
<div class="a" style="left:528px;top:441px;width:30px;height:13.5px;background:#9c2f86;overflow:hidden"><div class="t" style="left:1.5px;top:6.8px;font-size:5.5px;color:#f8eef4;transform:scaleX(0.9);transform-origin:0 0">I haven't told</div></div>
<div class="a" style="left:553px;top:454.5px;width:49px;height:14.5px;background:#9c2f86;overflow:hidden"><div class="t" style="left:1.5px;top:8.1px;font-size:5.5px;color:#f8eef4;transform:scaleX(0.9);transform-origin:0 0">I haven't told 8 yet a</div></div>
<div class="a" style="left:672px;top:454.5px;width:22px;height:14.5px;background:#9c2f86;overflow:hidden"><div class="t" style="left:1.5px;top:8.1px;font-size:5.5px;color:#f8eef4;transform:scaleX(0.9);transform-origin:0 0">New Record</div></div>
<div class="a" style="left:136.3px;top:336px;width:1px;height:169px;background:#2aa8b8;"></div>
<div class="a" style="left:757px;top:344.4px;width:9px;height:160.6px;background:#262626;"></div>
<div class="a" style="left:757.5px;top:353px;width:7px;height:83px;background:#6a6a6a;border-radius:1px"></div>
<div class="t" style="left:759px;top:345.5px;font-size:4px;color:#ddd;">▲</div>
<div class="a" style="left:44.5px;top:499px;width:712.5px;height:5px;background:#2b2b2b;"></div>
<div class="a" style="left:11px;top:504px;width:755px;height:13px;background:#262626;"></div>
<div class="a" style="left:12px;top:506px;width:11.5px;height:8px;background:#4a4a4a;"></div>
<div class="a" style="left:14px;top:508px;width:7.5px;height:0.7px;background:#aaa;"></div>
<div class="a" style="left:14px;top:510px;width:7.5px;height:0.7px;background:#aaa;"></div>
<div class="a" style="left:14px;top:512px;width:7.5px;height:0.7px;background:#aaa;"></div>
<div class="a" style="left:25px;top:505px;width:161px;height:9.5px;background:#050505;"></div>
<div class="t" style="left:46px;top:507px;font-size:6px;color:#2cc068;transform:scaleX(0.925);transform-origin:0 0;">KFK_240401-A.Copy.01 - 1920x1080 - 25.00 fps</div>
<div class="a" style="left:756px;top:506px;width:9px;height:9px;background:#6a3aa8;"></div>
<div class="t" style="left:759.5px;top:499px;font-size:3.6px;color:#ddd;">▼</div>
<div class="t" style="left:750.5px;top:507.5px;font-size:3.6px;color:#ddd;">▶</div>
<div class="a" style="left:190px;top:507px;width:6.5px;height:6px;background:#555;"></div>
<div class="a" style="left:200px;top:507px;width:8px;height:1px;background:#aaa;"></div>
<div class="a" style="left:200px;top:509.5px;width:3px;height:2.5px;background:#aaa;"></div>
<div class="a" style="left:204px;top:509.5px;width:4px;height:1px;background:#aaa;"></div>
<div class="a" style="left:204px;top:511.5px;width:4px;height:1px;background:#aaa;"></div>
<div class="a" style="left:211px;top:507px;width:6.5px;height:6px;background:#1e9a38;border-radius:1px"></div>
<div class="a" style="left:221px;top:507px;width:7px;height:6px;background:#2a8ac0;border-radius:1px"></div>
<div class="t" style="left:232.5px;top:506px;font-size:5.5px;color:#888;">◆</div>
<div class="t" style="left:243.5px;top:506px;font-size:5.5px;color:#888;">◆</div>
<div class="a" style="left:252px;top:506px;width:10px;height:8px;background:#2e2e2e;"></div>
<div class="a" style="left:262.5px;top:505.5px;width:40px;height:9px;background:#242424;"></div>
<div class="t" style="left:272px;top:507.5px;font-size:5px;color:#aaa;transform:scaleX(0.95);transform-origin:0 0;">AUDIO</div>
<div class="t" style="left:295px;top:506.5px;font-size:3.6px;color:#ddd;">▼</div>
<div class="a" style="left:301px;top:507px;width:6px;height:6px;background:transparent;border:1.1px solid #ddd;border-radius:50%"></div>
<div class="a" style="left:308px;top:505.5px;width:64px;height:9px;background:#242424;"></div>
<div class="t" style="left:373px;top:507.3px;font-size:4px;color:#bbb;">▼ ◀ ▶</div>
<div class="a" style="left:390px;top:507px;width:3px;height:5px;background:#555;"></div>
<div class="a" style="left:440px;top:507px;width:14px;height:6px;background:#555;"></div>
<div class="a" style="left:461px;top:507px;width:6px;height:6px;background:#444;"></div>
<div class="t" style="left:470px;top:507.3px;font-size:4px;color:#bbb;">◀</div>
<div class="a" style="left:474px;top:507px;width:15px;height:6px;background:#555;"></div>
</body></html>
